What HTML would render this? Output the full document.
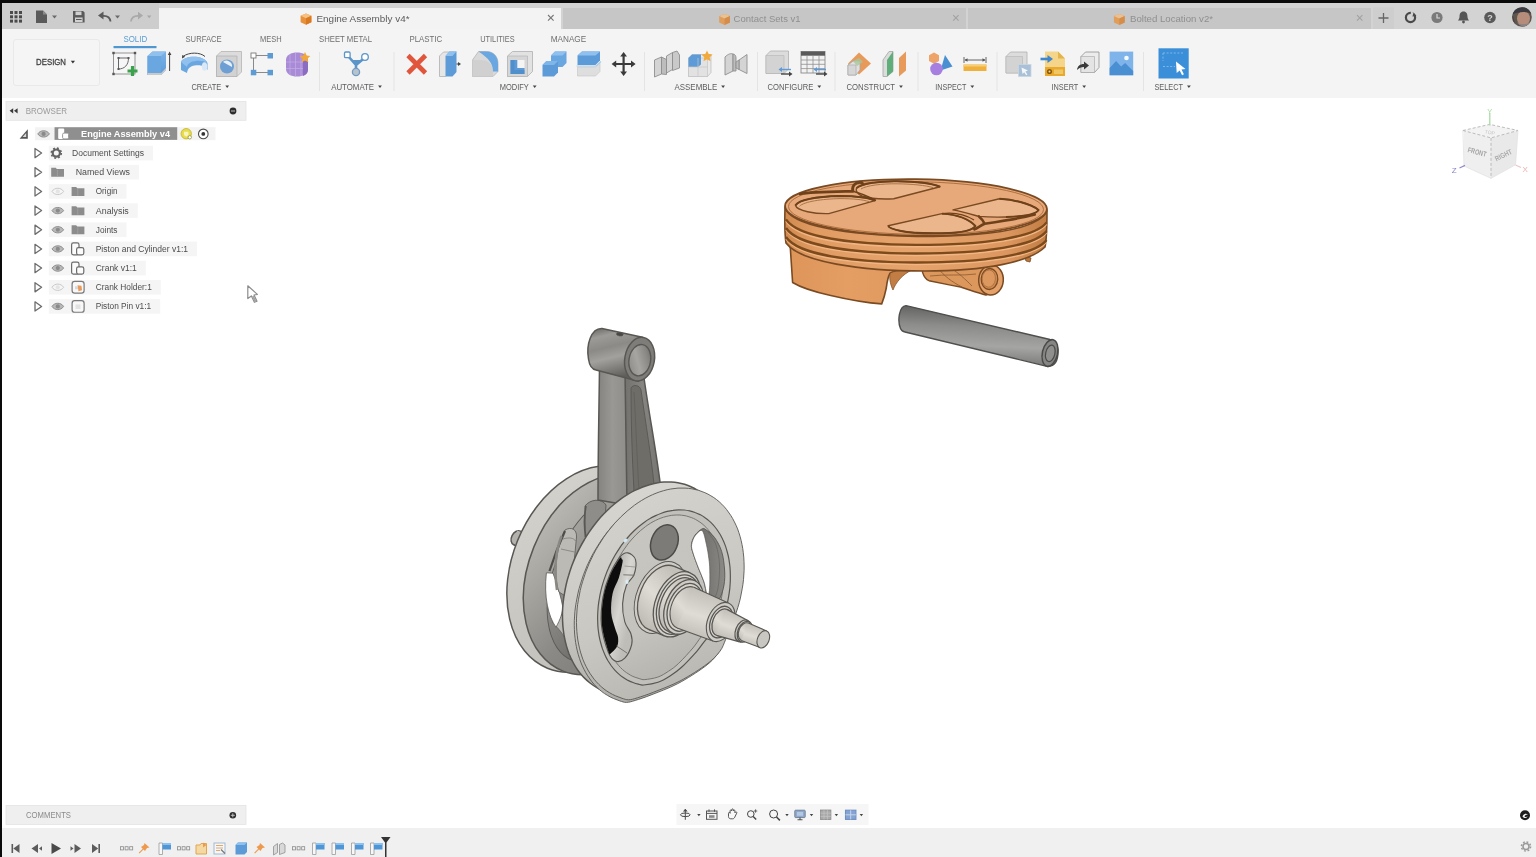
<!DOCTYPE html>
<html lang="en">
<head>
<meta charset="utf-8">
<title>Engine Assembly v4 - Fusion</title>
<style>
*{box-sizing:border-box;margin:0;padding:0}
html,body{width:1536px;height:857px;overflow:hidden;background:#fff;font-family:"Liberation Sans",sans-serif;color:#555}
#app{position:absolute;left:0;top:0;width:1536px;height:857px;overflow:hidden;background:#fff}
.abs{position:absolute}
#blacktop{left:0;top:0;width:1536px;height:3px;background:#0a0a0a}
#blackleft{left:0;top:0;width:2px;height:857px;background:#0a0a0a}
#titlebar{left:2px;top:3px;width:1534px;height:26px;background:#d3d3d3}
#qat{left:2px;top:3px;width:157px;height:26px;background:#cdcdcd}
.tab{position:absolute;top:7.5px;height:21.5px;background:#c6c6c6;font-size:9px;color:#8a8a8a;line-height:22px;white-space:nowrap}
.tab.active{background:#f3f3f3;color:#666}
.tab .x{position:absolute;right:6px;top:0;font-size:11px;color:#999}
#toolbar{left:2px;top:29px;width:1534px;height:68.6px;background:#f4f4f4}
.ttab{position:absolute;top:33px;font-size:7.5px;color:#6d6d6d;letter-spacing:0;white-space:nowrap;transform:translateX(-50%)}
.ttab.on{color:#5b9bd0}
.glabel{position:absolute;top:82px;font-size:7.5px;color:#5f5f5f;white-space:nowrap;transform:translateX(-50%)}
.sep{position:absolute;top:44px;width:1px;height:48px;background:#e4e4e4}
#design{left:12.6px;top:38.5px;width:87px;height:47.5px;border:1px solid #e9e9e9;border-radius:3px;background:#f5f5f5;font-size:8px;color:#444;text-align:center;line-height:46px;font-weight:bold}
#canvas{left:2px;top:98px;width:1534px;height:730px;background:#fff}
#bhead{left:6px;top:101px;width:240px;height:19px;background:#f0f0f0;border:1px solid #e8e8e8;font-size:7.5px;color:#7a7a7a;line-height:18px}
.row{position:absolute;height:15px;font-size:7.5px;color:#5a5a5a;line-height:15px;white-space:nowrap}
.lbl{position:absolute;top:0;height:15px;background:#f3f3f3;padding:0 6px;line-height:15px}
#comments{left:6px;top:805px;width:240px;height:19px;background:#f0f0f0;border:1px solid #e8e8e8;font-size:7.5px;color:#7a7a7a;line-height:18px}
#timeline{left:2px;top:828px;width:1534px;height:29px;background:#f0f0f0}
</style>
</head>
<body>
<div id="app">
  <div class="abs" id="titlebar"></div>
  <div class="abs" id="qat"></div>
  <div class="tab active" style="left:159px;width:402px"></div>
  <div class="tab" style="left:563px;width:403px"></div>
  <div class="tab" style="left:968px;width:403px"></div>
  <div class="abs" id="toolbar"></div>
  <div class="abs" id="design"></div>
  <svg class="abs" style="left:0;top:0;filter:blur(0.3px)" width="1536" height="98" viewBox="0 0 1536 98">
<defs>
<linearGradient id="tBlue" x1="0" y1="0" x2="0" y2="1"><stop offset="0" stop-color="#7ab2e6"/><stop offset="1" stop-color="#5c9bd8"/></linearGradient>
<linearGradient id="tGray" x1="0" y1="0" x2="1" y2="1"><stop offset="0" stop-color="#e4e4e4"/><stop offset="1" stop-color="#c4c4c4"/></linearGradient>
</defs>
<!-- quick access -->
<g fill="#4a4a4a">
  <g id="gridic"><rect x="10" y="11" width="3" height="3"/><rect x="14.5" y="11" width="3" height="3"/><rect x="19" y="11" width="3" height="3"/><rect x="10" y="15.3" width="3" height="3"/><rect x="14.5" y="15.3" width="3" height="3"/><rect x="19" y="15.3" width="3" height="3"/><rect x="10" y="19.6" width="3" height="3"/><rect x="14.5" y="19.6" width="3" height="3"/><rect x="19" y="19.6" width="3" height="3"/></g>
  <path d="M36 10.5h7l4 4v8.5h-11z" fill="#5a5a5a"/><path d="M43 10.5l4 4h-4z" fill="#8a8a8a"/>
  <path d="M52 15.5h5l-2.5 3z" fill="#6a6a6a"/>
  <path d="M73 11h10l1.6 1.6v9.9h-11.6z" fill="#5a5a5a"/><rect x="75.5" y="11.5" width="6" height="3.6" fill="#d0d0d0"/><rect x="75" y="17.5" width="7.6" height="4.5" fill="#d0d0d0"/><rect x="76" y="19" width="5.6" height="1" fill="#5a5a5a"/>
  <path d="M115 15.5h5l-2.5 3z" fill="#6a6a6a"/>
  <path d="M147 15.5h4.4l-2.2 2.8z" fill="#a8a8a8"/>
</g>
<path d="M110.5 21.5c-0.5-4-3.5-6-8-5.6" fill="none" stroke="#5a5a5a" stroke-width="1.8"/><path d="M98 15.6l5.5-4v8z" fill="#5a5a5a"/>
<path d="M131 21.5c0.5-4 3.5-6 8-5.6" fill="none" stroke="#a9a9a9" stroke-width="1.7"/><path d="M143 15.6l-5-3.8v7.6z" fill="#a9a9a9"/>
<!-- tab icons (orange cubes) -->
<g id="cube1"><path d="M306 13.6l5.4 2.2v6.4l-5.4 2.6l-5.4-2.6v-6.4z" fill="#e8913a"/><path d="M306 13.6l5.4 2.2l-5.4 2.4l-5.4-2.4z" fill="#f6c080"/><path d="M306 18.2v6.6l5.4-2.6v-6.4z" fill="#d97a22"/></g>
<g transform="translate(418.6,0.3)" opacity="0.75"><path d="M306 13.6l5.4 2.2v6.4l-5.4 2.6l-5.4-2.6v-6.4z" fill="#e8913a"/><path d="M306 13.6l5.4 2.2l-5.4 2.4l-5.4-2.4z" fill="#f6c080"/><path d="M306 18.2v6.6l5.4-2.6v-6.4z" fill="#d97a22"/></g>
<g transform="translate(813.3,0.3)" opacity="0.75"><path d="M306 13.6l5.4 2.2v6.4l-5.4 2.6l-5.4-2.6v-6.4z" fill="#e8913a"/><path d="M306 13.6l5.4 2.2l-5.4 2.4l-5.4-2.4z" fill="#f6c080"/><path d="M306 18.2v6.6l5.4-2.6v-6.4z" fill="#d97a22"/></g>
<!-- tab close X -->
<g stroke="#777" stroke-width="1.1" fill="none"><path d="M548 15l5.6 5.6M553.6 15l-5.6 5.6"/></g>
<g stroke="#a2a2a2" stroke-width="1.1" fill="none"><path d="M953.2 15.2l5.4 5.4M958.6 15.2l-5.4 5.4"/><path d="M1357 15.2l5.4 5.4M1362.4 15.2l-5.4 5.4"/></g>
<!-- plus -->
<rect x="1373" y="7.5" width="21" height="21.5" fill="#cecece"/>
<path d="M1378.5 18h10M1383.5 13v10" stroke="#666" stroke-width="1.3"/>
<!-- right icons -->
<circle cx="1410.5" cy="17.5" r="4.6" fill="none" stroke="#4a4a4a" stroke-width="2.2"/><path d="M1411 11l4 3l-4.5 2z" fill="#d2d2d2"/><path d="M1413.6 12.6l2.8 3.4l-4 0.6z" fill="#4a4a4a"/>
<circle cx="1437" cy="17.5" r="5.6" fill="#7a7a7a"/><path d="M1437 14v4h3" stroke="#d9d9d9" stroke-width="1.2" fill="none"/>
<path d="M1463.5 11.5c-3 0-4 2.5-4 5.2c0 2-1 3-1.6 3.8h11.2c-0.6-0.8-1.6-1.8-1.6-3.8c0-2.7-1-5.2-4-5.2z" fill="#555"/><circle cx="1463.500" cy="22" r="1.400" fill="#555"/>
<circle cx="1490" cy="17.5" r="5.800" fill="#5a5a5a"/><text x="1490" y="20.8" font-size="9" font-weight="bold" text-anchor="middle" fill="#d6d6d6" font-family="Liberation Sans, sans-serif">?</text>
<clipPath id="avc"><circle cx="1522" cy="17" r="9.800"/></clipPath>
<g clip-path="url(#avc)"><rect x="1512" y="7" width="20" height="20" fill="#5e5550"/><ellipse cx="1523.500" cy="18.500" rx="6.500" ry="7.500" fill="#b58d7a"/><path d="M1512 7h20v7c-4-2.500-14-3-20 1z" fill="#3b3a40"/><path d="M1517 21.500c1.500 6 11.500 6 13 0c-1 2-3.500 2.500-6.500 2.500s-5.500-0.500-6.500-2.500z" fill="#8c8682"/><path d="M1512 14c2 3 3 9 3 13h-3z" fill="#4a4440"/></g>
<!-- SOLID underline -->
<rect x="113.5" y="46" width="43" height="2.2" fill="#4f97d1"/>
<!-- separators -->
<g fill="#e4e4e4"><rect x="319" y="52" width="1" height="39"/><rect x="393.5" y="52" width="1" height="39"/><rect x="644" y="52" width="1" height="39"/><rect x="757" y="52" width="1" height="39"/><rect x="834.5" y="52" width="1" height="39"/><rect x="917.5" y="52" width="1" height="39"/><rect x="996.5" y="52" width="1" height="39"/><rect x="1143" y="52" width="1" height="39"/></g>

<!-- CREATE -->
<g id="i-sketch"><rect x="113.5" y="53" width="21.5" height="21" fill="#f6f6f6" stroke="#8a8a8a" stroke-width="0.9"/><g fill="#555"><rect x="112.3" y="51.8" width="2.4" height="2.4"/><rect x="133.8" y="51.8" width="2.4" height="2.4"/><rect x="112.3" y="72.8" width="2.4" height="2.4"/></g><path d="M118.5 58h10c0 7-4 11-10 11z" fill="none" stroke="#666" stroke-width="1"/><g fill="#555"><rect x="117.5" y="57" width="2" height="2"/><rect x="127.5" y="57" width="2" height="2"/><rect x="117.5" y="68" width="2" height="2"/></g><path d="M132.5 66v10M127.5 71h10" stroke="#3aa24a" stroke-width="3.2"/></g>
<g id="i-extrude"><path d="M147.5 56l5-4.5h13.5v18.5l-5 5h-13.5z" fill="url(#tBlue)"/><path d="M147.5 56h13.5v19h-13.5z" fill="#6aa6e0"/><path d="M147.5 56l5-4.5h13.5l-5 4.5z" fill="#8fc0ee"/><path d="M147.5 73h13.5l5-5v2l-5 5h-13.5z" fill="#c9c9c9"/><path d="M169.6 54v17" stroke="#444" stroke-width="1"/><path d="M167.8 55l1.8-3.5l1.8 3.5z" fill="#444"/></g>
<g id="i-revolve"><path d="M181 62c2-6 22-8 26.5 1l0 7c-3-5-8-5-13-4.500c-4 0.500-7 3-7.500 7.500l-6-3z" fill="#6aa6e0"/><path d="M181 62c2-6 22-8 26.500 1c-5-4-20-3-20.500 4z" fill="#8fc0ee"/><ellipse cx="204.500" cy="66.500" rx="2.600" ry="4.200" fill="#d9e8f6"/><path d="M183 56.500c6-4.500 17-4.500 22 0" fill="none" stroke="#444" stroke-width="1"/><path d="M182 58.500l0.200-3.600l3 1.800z" fill="#444"/></g>
<g id="i-hole"><path d="M216.500 56l4.500-4.500h20.500v20.500l-4.500 4.500h-20.500z" fill="#dcdcdc" stroke="#b5b5b5" stroke-width="0.800"/><path d="M216.500 56h20.500v20.500h-20.500z" fill="#d2d2d2" stroke="#b0b0b0" stroke-width="0.700"/><circle cx="227" cy="66.500" r="7" fill="#6e9fd4"/><path d="M223 62a5.500 5.500 0 0 1 9 5z" fill="#e8f0f8"/></g>
<g id="i-pattern"><path d="M253.500 55.500h17M253.500 72.500h17M253.500 55.500v17" stroke="#8a8a8a" stroke-width="1" fill="none"/><rect x="251" y="53" width="5" height="5" fill="#fff" stroke="#7a7a7a" stroke-width="0.900"/><rect x="267.500" y="53" width="5.500" height="5.500" fill="#5f9bd3"/><rect x="250.800" y="69.800" width="5.500" height="5.500" fill="#5f9bd3"/><rect x="267.500" y="69.800" width="5.500" height="5.500" fill="#5f9bd3"/></g>
<g id="i-form"><path d="M286 60c0-5 5-7.500 11-7.500s11 2.500 11 7.500v9c0 5-5 7.500-11 7.500s-11-2.500-11-7.500z" fill="#a98ad6"/><path d="M303 57c3 1 5 2 5 5v8c0 3-2 5-5 6z" fill="#8a6cc0"/><path d="M290 54v21M295.500 53v23.500M301 53.500v22.500M286 62h17M286 68.500h17" stroke="#c3aee6" stroke-width="0.700" fill="none"/><path d="M303.500 51l1.600 3.400l3.700 0.500l-2.700 2.600l0.700 3.700l-3.300-1.800l-3.300 1.800l0.700-3.700l-2.700-2.600l3.700-0.500z" fill="#f2a93b" transform="translate(1.500,1) scale(1.000)"/></g>
<!-- AUTOMATE -->
<g id="i-auto"><path d="M348 56l8 9v6M365 57.500l-9 7.500" stroke="#5b95c9" stroke-width="2.600" fill="none"/><path d="M351 60l10 0l-5 6z" fill="#5b95c9"/><rect x="344.500" y="52" width="5.600" height="5.600" rx="1.200" fill="#fff" stroke="#5b95c9" stroke-width="1.300"/><circle cx="365" cy="57" r="3.300" fill="#fff" stroke="#5b95c9" stroke-width="1.300"/><circle cx="356" cy="72" r="3.600" fill="#b9c3cc" stroke="#6f9bc4" stroke-width="1.300"/></g>
<!-- MODIFY -->
<path d="M408 55.500l17.500 17.500M425.500 55.500l-17.500 17.500" stroke="#e2553d" stroke-width="4.600"/>
<g id="i-press"><path d="M439.500 56l4-4h6v20.500l-4 4h-6z" fill="#e6e6e6" stroke="#b0b0b0" stroke-width="0.800"/><path d="M445.500 56l4-4.500h7v20.500l-4 4.500h-7z" fill="#5c9bd8"/><path d="M445.500 56l4-4.500h7l-4 4.500z" fill="#8fc0ee"/><path d="M456.500 64h2" stroke="#444" stroke-width="1"/><path d="M458 62l3 2l-3 2z" fill="#444"/></g>
<g id="i-fillet"><path d="M472.500 60l6-8.500h8c7 0 11.500 5 11.500 12v8l-5 5h-20.500z" fill="#d9d9d9" stroke="#b5b5b5" stroke-width="0.800"/><path d="M472.500 60h8c7 0 12 3 12.500 12v4.500h-20.500z" fill="#d0d0d0"/><path d="M478.500 51.500h8c7 0 11.500 5 11.500 12v8l-5 0c0-8-4-13-14.500-20z" fill="#6aa6e0"/></g>
<g id="i-shell"><path d="M507.500 56l5-4.500h20v20l-5 5h-20z" fill="#e2e2e2" stroke="#b0b0b0" stroke-width="0.800"/><path d="M507.500 56h20v20.500h-20z" fill="#d6d6d6" stroke="#b5b5b5" stroke-width="0.700"/><path d="M510.500 60h7v8h7v6h-14z" fill="#5c9bd8"/><path d="M517.500 60h7v8h-7z" fill="#f4f4f4"/><path d="M510.500 60h4v10h10v4h-14z" fill="#4a86c4" opacity="0.600"/></g>
<g id="i-combine"><path d="M551 55.500l4-4h11.500v11.500l-4 4h-11.500z" fill="#6aa6e0"/><path d="M551 55.500l4-4h11.500l-4 4z" fill="#8fc0ee"/><path d="M542.500 65l4-4h11.500v11.500l-4 4h-11.500z" fill="#5c9bd8"/><path d="M542.500 65l4-4h11.500l-4 4z" fill="#7fb6ea"/></g>
<g id="i-split"><path d="M577.500 55.500l4.500-4h18v9l-4.500 4.500h-18z" fill="#5c9bd8"/><path d="M577.500 55.500l4.500-4h18l-4.500 4z" fill="#8fc0ee"/><path d="M577.500 67h18l4.500-4v8.500l-4.500 4.500h-18z" fill="#dedede" stroke="#c4c4c4" stroke-width="0.600"/><path d="M576.500 66l19.500 0l5-4.500" stroke="#a9cdee" stroke-width="1.200" fill="none"/></g>
<g id="i-move" fill="#3a3a3a"><path d="M623.600 52l3.400 4.600h-2.300v6.300h6.300v-2.300l4.600 3.400l-4.600 3.400v-2.300h-6.300v6.300h2.300l-3.400 4.600l-3.400-4.600h2.300v-6.300h-6.300v2.300l-4.600-3.400l4.600-3.400v2.300h6.300v-6.300h-2.300z"/></g>
<!-- ASSEMBLE -->
<g id="i-joint1" fill="#d4d4d4" stroke="#8f8f8f" stroke-width="0.900"><path d="M654.500 60l7-3v17l-7 3z"/><path d="M661.500 57l5 2.500v15l-5-0.500z" fill="#bdbdbd"/><path d="M666.500 56l6-3.500v17l-6 3.500z"/><path d="M672.500 52.500l4.500-1.500l2.500 4v13l-7 2.500z" fill="#c9c9c9"/></g>
<g id="i-newcomp"><path d="M688.500 58l3.500-3.500h19v18l-3.500 4h-19z" fill="#e9e9e9" stroke="#b9b9b9" stroke-width="0.700"/><path d="M688.500 58h19v18.500h-19z" fill="#e2e2e2" stroke="#c0c0c0" stroke-width="0.600"/><path d="M688.500 58l3.500-3.500h9v10l-3 2.500h-9.500z" fill="#5c9bd8"/><path d="M698 58v18.500M688.500 67h19" stroke="#c6c6c6" stroke-width="0.700"/><path d="M707 50.500l1.700 3.600l3.900 0.500l-2.900 2.700l0.800 3.900l-3.500-1.900l-3.500 1.900l0.800-3.900l-2.900-2.700l3.900-0.500z" fill="#f2a93b"/></g>
<g id="i-joint3" fill="#d4d4d4" stroke="#8f8f8f" stroke-width="0.900"><path d="M725 57c3-3 6-4 8-3v17l-8 4z"/><path d="M733 54c2 0 3 2 3 4v13l-3 0z" fill="#bdbdbd"/><path d="M739 60l8-5.500v19l-8-4z"/><path d="M739 60l-3 2v6l3 1.500z" fill="#bdbdbd"/></g>
<!-- CONFIGURE -->
<g id="i-conf1"><path d="M766 55.500l4.500-4.500h18v18l-4.500 4.500h-18z" fill="#dcdcdc" stroke="#b0b0b0" stroke-width="0.800"/><path d="M766 55.500h18v18h-18z" fill="#d3d3d3" stroke="#b5b5b5" stroke-width="0.600"/><path d="M781 69.500h10" stroke="#5c9bd8" stroke-width="1.400"/><path d="M782 67l-3.500 2.500l3.500 2.500z" fill="#5c9bd8"/><path d="M781 74h9" stroke="#444" stroke-width="1.400"/><path d="M789 71.500l3.500 2.500l-3.500 2.500z" fill="#444"/></g>
<g id="i-conf2"><rect x="801" y="51.500" width="24" height="21.500" fill="#f2f2f2" stroke="#8a8a8a" stroke-width="0.900"/><rect x="801" y="51.500" width="24" height="4.200" fill="#5a5a5a"/><path d="M801 60h24M801 64.300h24M801 68.600h24M807 55.700v17.300M813 55.700v17.300M819 55.700v17.300" stroke="#8f8f8f" stroke-width="0.800"/><path d="M816 69.500h10" stroke="#5c9bd8" stroke-width="1.400"/><path d="M817 67l-3.500 2.500l3.500 2.500z" fill="#5c9bd8"/><path d="M816 74h9" stroke="#444" stroke-width="1.400"/><path d="M824 71.500l3.500 2.500l-3.500 2.500z" fill="#444"/></g>
<!-- CONSTRUCT -->
<g id="i-cons1"><path d="M859 52.500l12 11l-12 11l-11-11z" fill="#e89a5a"/><path d="M848 65l5-4h7v9l-4 5h-8z" fill="#e0e0e0" stroke="#a5a5a5" stroke-width="0.800"/><path d="M848 65h8v10h-8z" fill="#d6d6d6" stroke="#a5a5a5" stroke-width="0.600"/><path d="M853 61l6-3l4 4l-6 4z" fill="#a9c79a" opacity="0.800"/></g>
<g id="i-cons2"><path d="M883 60l6-8.500h4v20l-6 5h-4z" fill="#dcdcdc" stroke="#a5a5a5" stroke-width="0.800"/><path d="M887 60l6-8.500v20l-6 5z" fill="#5fae7a"/><path d="M899 58l7-6.500v19l-7 6z" fill="#e89a5a"/></g>
<!-- INSPECT -->
<g id="i-insp1"><path d="M934 52.500l5 2.800v5.700l-5 2.800l-5-2.800v-5.700z" fill="#eea468"/><path d="M945 55l7.500 11.500l-12 4z" fill="#4a8fd2"/><circle cx="936.500" cy="69" r="6.300" fill="#a77fe0"/></g>
<g id="i-insp2"><rect x="963.500" y="64.500" width="23" height="6.500" fill="#efb13c"/><rect x="963.500" y="64.500" width="23" height="2" fill="#f6cf7a"/><path d="M964 57v6M986 57v6M965 60h20" stroke="#555" stroke-width="0.900"/><path d="M967.500 58.300l-3 1.700l3 1.700zM982.500 58.300l3 1.700l-3 1.700z" fill="#555"/></g>
<!-- INSERT -->
<g id="i-ins1"><path d="M1006 56.500l4.500-4.500h16.500v16.500l-4.500 4.500h-16.500z" fill="#dcdcdc" stroke="#b0b0b0" stroke-width="0.800"/><path d="M1006 56.500h16.500v16.500h-16.500z" fill="#d3d3d3" stroke="#b5b5b5" stroke-width="0.600"/><rect x="1018.500" y="64.500" width="12.500" height="12" fill="#a9c0d6" stroke="#c9d6e2" stroke-width="0.800"/><path d="M1021.500 67.500l6.500 3l-2.600 0.900l2 3l-1.200 0.800l-2-3l-1.700 1.900z" fill="#f4f8fc"/></g>
<g id="i-ins2"><path d="M1045 51.500h13l7 7v17.500h-20z" fill="#f4d58a"/><path d="M1058 51.500l7 7h-7z" fill="#e3b54a"/><rect x="1045" y="67" width="20" height="9" fill="#e9a92c"/><circle cx="1049.500" cy="71.500" r="2.600" fill="#8a5a10"/><circle cx="1049.500" cy="71.500" r="1" fill="#f4d58a"/><path d="M1054 69.500h9v4.500h-9z" fill="#f1c766"/><path d="M1040.500 59h8" stroke="#3f86d0" stroke-width="2.600"/><path d="M1047.500 55l5.500 4l-5.500 4z" fill="#3f86d0"/></g>
<g id="i-ins3"><path d="M1081 56.500l4.500-4.500h13.500v15.500l-4.500 5h-13.500z" fill="#ececec" stroke="#9a9a9a" stroke-width="0.900"/><path d="M1081 56.500h13.500v16h-13.500z" fill="#e4e4e4" stroke="#a5a5a5" stroke-width="0.600"/><path d="M1077 70c0.500-4 3-6 7-6v-2.500l5 4l-5 4v-2.500c-3 0-5 1-7 3z" fill="#3a3a3a"/></g>
<g id="i-ins4"><rect x="1109.600" y="51.600" width="23.600" height="23.600" fill="#7fb4ea"/><path d="M1109.600 68l6.500-7l5 5.500l4-3.500l8.100 8v4.200h-23.600z" fill="#4a8fd2"/><circle cx="1126.500" cy="58" r="2.300" fill="#f4f9ff"/></g>
<!-- SELECT -->
<g id="i-select"><rect x="1158.500" y="48.300" width="30.200" height="30.200" fill="#3b8fd8"/><path d="M1163 53h21M1163 53v8M1163 66.500h12" stroke="#7db6ea" stroke-width="1" stroke-dasharray="2 1.600" fill="none"/><path d="M1176 61.500l9.500 7.500l-4 0.600l2.400 4.600l-1.800 1l-2.400-4.700l-3 2.600z" fill="#fff"/></g>
</svg>

  <div class="abs" id="canvas"></div>
<svg class="abs" style="left:0;top:0;filter:blur(0.5px)" width="1536" height="857" viewBox="0 0 1536 857">
<defs>
<linearGradient id="gRim" x1="0" y1="0" x2="1" y2="1"><stop offset="0" stop-color="#d6d4cf"/><stop offset="1" stop-color="#bebcb7"/></linearGradient>
<linearGradient id="gFace" x1="0" y1="0" x2="1" y2="1"><stop offset="0" stop-color="#d9d7d2"/><stop offset="1" stop-color="#c9c7c2"/></linearGradient>
<linearGradient id="gRecess" x1="0" y1="0" x2="1" y2="1"><stop offset="0" stop-color="#c9c7c2"/><stop offset="1" stop-color="#d1cfca"/></linearGradient>
<linearGradient id="gBackFace" x1="0" y1="0" x2="1" y2="0.6"><stop offset="0" stop-color="#c4c2bc"/><stop offset="0.35" stop-color="#a9a7a2"/><stop offset="0.7" stop-color="#8b8985"/><stop offset="1" stop-color="#7f7d79"/></linearGradient>
<linearGradient id="gBackIn" x1="0" y1="0" x2="1" y2="0.3"><stop offset="0" stop-color="#8f8d89"/><stop offset="1" stop-color="#6f6d6a"/></linearGradient>
<linearGradient id="gRodF" x1="0" y1="0" x2="1" y2="0"><stop offset="0" stop-color="#858380"/><stop offset="0.5" stop-color="#9a9894"/><stop offset="1" stop-color="#8f8d89"/></linearGradient>
<linearGradient id="gRodS" x1="0" y1="0" x2="1" y2="0"><stop offset="0" stop-color="#72706d"/><stop offset="0.5" stop-color="#878581"/><stop offset="1" stop-color="#767471"/></linearGradient>
<linearGradient id="gCyl" x1="0" y1="0" x2="0.25" y2="1"><stop offset="0" stop-color="#63615e"/><stop offset="0.2" stop-color="#9d9b97"/><stop offset="0.42" stop-color="#8c8a86"/><stop offset="0.62" stop-color="#a3a19d"/><stop offset="0.86" stop-color="#7a7874"/><stop offset="1" stop-color="#615f5c"/></linearGradient>
<linearGradient id="gShaft" x1="0.3" y1="0" x2="0" y2="1"><stop offset="0" stop-color="#c3c0b9"/><stop offset="0.45" stop-color="#dfdcd5"/><stop offset="1" stop-color="#b5b2ac"/></linearGradient>
<linearGradient id="gPin" x1="0.12" y1="0" x2="0" y2="1"><stop offset="0" stop-color="#626261"/><stop offset="0.3" stop-color="#8c8c8a"/><stop offset="0.6" stop-color="#a5a5a3"/><stop offset="1" stop-color="#6a6a69"/></linearGradient>
<linearGradient id="gPTop" x1="0" y1="0" x2="1" y2="0"><stop offset="0" stop-color="#dc9a63"/><stop offset="0.5" stop-color="#e3a46e"/><stop offset="1" stop-color="#dd9c66"/></linearGradient>
<linearGradient id="gPSide" x1="0" y1="0" x2="1" y2="0"><stop offset="0" stop-color="#d08a50"/><stop offset="0.12" stop-color="#e09c63"/><stop offset="0.5" stop-color="#e6a36c"/><stop offset="0.85" stop-color="#dc9760"/><stop offset="1" stop-color="#c27d44"/></linearGradient>
<linearGradient id="gPSkirt" x1="0" y1="0" x2="1" y2="0"><stop offset="0" stop-color="#dd955a"/><stop offset="0.5" stop-color="#e49d62"/><stop offset="1" stop-color="#e09960"/></linearGradient>
<clipPath id="chord"><polygon points="276,954 1090,393 1090,200 276,200"/></clipPath>
</defs>
<g id="crank">
<ellipse cx="517.0" cy="538.0" rx="5.5" ry="7.5" transform="rotate(26.5 517.0 538.0)" fill="#b4b2ad" stroke="#595753" stroke-width="1.5" />
<path d="M517 530.5 L525 533.5 L523 547.5 L515 545.5 Z" fill="#b4b2ad" stroke="none" stroke-width="1.5" stroke-linejoin="round" />
<ellipse cx="587.5" cy="569.0" rx="75.5" ry="107.0" transform="rotate(22 587.5 569.0)" fill="url(#gRim)" stroke="#595753" stroke-width="1.5" />
<ellipse cx="601.5" cy="574.5" rx="73.0" ry="104.0" transform="rotate(22 601.5 574.5)" fill="url(#gBackFace)" stroke="#595753" stroke-width="1.5" />
<linearGradient id="gBackIn2" gradientUnits="userSpaceOnUse" x1="545" y1="560" x2="640" y2="600"><stop offset="0" stop-color="#a7a5a0"/><stop offset="0.4" stop-color="#908e8a"/><stop offset="1" stop-color="#6f6d6a"/></linearGradient>
<ellipse cx="606.0" cy="577.0" rx="52.0" ry="90.0" transform="rotate(22 606.0 577.0)" fill="url(#gBackIn2)" stroke="#595753" stroke-width="0.9" />
<path d="M552 622 C556 626 562 632 566 640 L572 634 L566 612 Z" fill="#bdbbb6" stroke="#595753" stroke-width="0.7" stroke-linejoin="round" />
<path d="M546.4 572.8 L553 573.2 C557.5 585 561 597 562.8 607 C562.5 613 560.5 619 556 627.2 C548.5 617 543.6 597 546.4 572.8 Z" fill="#ffffff" stroke="#595753" stroke-width="0.8" stroke-linejoin="round" />
<path d="M565 530 C571 526.5 577 529 576.5 537 C575.5 550 574 562 572.5 575 C571.5 584 570 592 568.5 598 L559 592 C553 575 556 548 565 530 Z" fill="#bcbab5" stroke="#595753" stroke-width="0.8" stroke-linejoin="round" />
<path d="M563 539 C569 537 574 538 575.5 541 M561 549 L574.5 552" fill="none" stroke="#77756f" stroke-width="0.7" stroke-linejoin="round" />
<path d="M565 531 C558 546 553 560 549.5 571" fill="none" stroke="#4f4d4a" stroke-width="2.2" stroke-linejoin="round" />
<path d="M561.5 536 C556 550 554 570 557 590" fill="none" stroke="#8a8884" stroke-width="2.5" stroke-linejoin="round" />
<path d="M585 506 C590 499 602 498 606 505 L604 537 C598 545 589 543 585 537 Z" fill="#8f8d89" stroke="#595753" stroke-width="0.9" stroke-linejoin="round" />
<path d="M586 506 C584 516 584 528 586 537" fill="none" stroke="#5a5854" stroke-width="1.6" stroke-linejoin="round" />
</g>
<g id="rod">
<path d="M624 372 L644 378 C650 420 657 455 661 490 L626 500 Z" fill="url(#gRodS)" stroke="#595753" stroke-width="1.5" stroke-linejoin="round" />
<path d="M631 388 C633 384 640 385 641 390 C646 425 651 455 654 484 L634 492 C632 455 631 420 631 388 Z" fill="#6f6d67" stroke="#595753" stroke-width="0.9" stroke-linejoin="round" />
<path d="M634 392 C636 425 637 460 639 490" fill="none" stroke="#5d5b58" stroke-width="0.7" stroke-linejoin="round" />
<path d="M599.5 368 L625 372 L627 505 L598 500 C598 455 599 410 599.5 368 Z" fill="url(#gRodF)" stroke="#595753" stroke-width="1.5" stroke-linejoin="round" />
<path d="M602 328.5 C591 328 586 345 588.5 359 C589.5 366 592.5 369.5 596 370 L638.5 381.2 L642.5 337.2 Z" fill="url(#gCyl)" stroke="#595753" stroke-width="1.5" stroke-linejoin="round" />
<linearGradient id="gHole" x1="0" y1="0.8" x2="1" y2="0.1"><stop offset="0" stop-color="#8d8b87"/><stop offset="0.4" stop-color="#a7a5a1"/><stop offset="0.75" stop-color="#8a8884"/><stop offset="1" stop-color="#6c6a67"/></linearGradient>
<ellipse cx="639.6" cy="359.2" rx="14.8" ry="22.0" transform="rotate(10 639.6 359.2)" fill="#7f7d79" stroke="#595753" stroke-width="1.5" />
<ellipse cx="639.8" cy="360.2" rx="10.8" ry="15.8" transform="rotate(10 639.8 360.2)" fill="url(#gHole)" stroke="#595753" stroke-width="1.4" />
<ellipse cx="619.8" cy="334.3" rx="3.4" ry="1.7" transform="rotate(8 619.8 334.3)" fill="#4a4846" stroke="#595753" stroke-width="0.6" />
</g>
<linearGradient id="gFace2" gradientUnits="userSpaceOnUse" x1="610" y1="500" x2="690" y2="700"><stop offset="0" stop-color="#d4d2cd"/><stop offset="0.55" stop-color="#cac8c3"/><stop offset="1" stop-color="#b7b5b0"/></linearGradient>
<linearGradient id="gRec2" gradientUnits="userSpaceOnUse" x1="620" y1="520" x2="690" y2="690"><stop offset="0" stop-color="#c8c6c1"/><stop offset="0.6" stop-color="#c5c3be"/><stop offset="1" stop-color="#b0aea9"/></linearGradient>
<linearGradient id="gRim2" gradientUnits="userSpaceOnUse" x1="600" y1="490" x2="600" y2="700"><stop offset="0" stop-color="#d7d5d0"/><stop offset="0.6" stop-color="#cdcbc6"/><stop offset="1" stop-color="#b0aea9"/></linearGradient>
<g id="fwheel">
<path d="M717.3 619.5 C716.0 622.4 714.6 625.3 713.1 628.2 C711.6 631.1 710.1 633.9 708.4 636.6 C706.8 639.4 705.1 642.1 703.3 644.7 C701.5 647.3 699.6 649.9 697.7 652.3 C695.8 654.8 693.8 657.2 691.8 659.5 C689.7 661.8 687.6 664.0 685.4 666.1 C683.3 668.2 681.1 670.2 678.8 672.1 C676.6 674.0 674.3 675.8 672.0 677.5 C669.7 679.2 667.3 680.7 664.9 682.2 C662.6 683.6 660.1 685.0 657.7 686.2 C655.3 687.4 652.9 688.5 650.5 689.4 C648.0 690.4 645.6 691.2 643.1 691.9 C640.7 692.6 638.3 693.2 635.9 693.6 C633.4 694.0 631.0 694.3 628.6 694.5 C626.3 694.6 623.9 694.6 621.6 694.5 C619.2 694.4 616.9 694.2 614.7 693.8 C612.4 693.4 610.2 692.9 608.0 692.3 C605.9 691.6 603.7 690.8 601.7 689.9 C599.6 689.0 597.6 688.0 595.7 686.8 C593.7 685.7 591.8 684.4 590.0 683.0 C588.2 681.6 586.5 680.1 584.8 678.4 C583.2 676.8 581.6 675.0 580.1 673.2 C578.6 671.3 577.2 669.3 575.9 667.3 C574.6 665.2 573.3 663.0 572.2 660.7 C571.0 658.5 570.0 656.1 569.0 653.7 C568.1 651.3 567.3 648.7 566.5 646.1 C565.8 643.5 565.1 640.9 564.6 638.1 C564.0 635.4 563.6 632.6 563.3 629.8 C562.9 626.9 562.7 624.0 562.6 621.1 C562.5 618.1 562.4 615.2 562.5 612.1 C562.6 609.1 562.8 606.1 563.1 603.0 C563.4 600.0 563.8 596.9 564.4 593.8 C564.9 590.7 565.5 587.6 566.2 584.5 C566.9 581.4 567.7 578.3 568.7 575.3 C569.6 572.2 570.6 569.1 571.7 566.1 C572.8 563.1 574.0 560.1 575.3 557.1 C576.6 554.2 578.0 551.3 579.5 548.4 C581.0 545.5 582.5 542.7 584.2 540.0 C585.8 537.2 587.5 534.5 589.3 531.9 C591.1 529.3 593.0 526.7 594.9 524.3 C596.8 521.8 598.8 519.4 600.8 517.1 C602.9 514.8 605.0 512.6 607.2 510.5 C609.3 508.4 611.5 506.4 613.8 504.5 C616.0 502.6 618.3 500.8 620.6 499.1 C622.9 497.4 625.3 495.9 627.7 494.4 C630.0 493.0 632.5 491.6 634.9 490.4 C637.3 489.2 639.7 488.1 642.1 487.2 C644.6 486.2 647.0 485.4 649.5 484.7 C651.9 484.0 654.3 483.4 656.7 483.0 C659.2 482.6 661.6 482.3 664.0 482.1 C666.3 482.0 668.7 482.0 671.0 482.1 C673.4 482.2 675.7 482.4 677.9 482.8 C680.2 483.2 682.4 483.7 684.6 484.3 C686.7 485.0 688.9 485.8 690.9 486.7 C693.0 487.6 695.0 488.6 696.9 489.8 C698.9 490.9 700.8 492.2 702.6 493.6 C704.4 495.0 706.1 496.5 707.8 498.2 C709.4 499.8 711.0 501.6 712.5 503.4 C714.0 505.3 715.4 507.3 716.7 509.3 C718.0 511.4 719.3 513.6 720.4 515.9 C721.6 518.1 722.6 520.5 723.6 522.9 C724.5 525.3 725.3 527.9 726.1 530.5 C726.8 533.1 727.5 535.7 728.0 538.5 C728.6 541.2 729.0 544.0 729.3 546.8 C729.7 549.7 729.9 552.6 730.0 555.5 C730.1 558.5 730.2 561.4 730.1 564.5 C730.0 567.5 729.8 570.5 729.5 573.6 C729.2 576.6 728.8 579.7 728.2 582.8 C727.7 585.9 727.1 589.0 726.4 592.1 C725.7 595.2 724.9 598.3 723.9 601.3 C723.0 604.4 722.0 607.5 720.9 610.5 C719.8 613.5 718.6 616.5 717.3 619.5 Z" fill="url(#gRim2)" stroke="#595753" stroke-width="1.5" stroke-linejoin="round" />
<path d="M626.5 702.4 C623.9 702.5 622.0 701.5 619.8 700.9 C617.7 700.2 615.5 699.4 613.5 698.5 C611.4 697.6 609.4 696.6 607.5 695.4 C605.5 694.3 603.6 693.0 601.8 691.6 C600.0 690.2 598.3 688.7 596.6 687.0 C595.0 685.4 593.4 683.6 591.9 681.8 C590.4 679.9 589.0 677.9 587.7 675.9 C586.4 673.8 585.1 671.6 584.0 669.3 C582.8 667.1 581.8 664.7 580.8 662.3 C579.9 659.9 579.1 657.3 578.3 654.7 C577.6 652.1 576.9 649.5 576.4 646.7 C575.8 644.0 575.4 641.2 575.1 638.4 C574.7 635.5 574.5 632.6 574.4 629.7 C574.3 626.7 574.2 623.8 574.3 620.7 C574.4 617.7 574.6 614.7 574.9 611.6 C575.2 608.6 575.6 605.5 576.2 602.4 C576.7 599.3 577.3 596.2 578.0 593.1 C578.7 590.0 579.5 586.9 580.5 583.9 C581.4 580.8 582.4 577.7 583.5 574.7 C584.6 571.7 585.8 568.7 587.1 565.7 C588.4 562.8 589.8 559.9 591.3 557.0 C592.8 554.1 594.3 551.3 596.0 548.6 C597.6 545.8 599.3 543.1 601.1 540.5 C602.9 537.9 604.8 535.3 606.7 532.9 C608.6 530.4 610.6 528.0 612.6 525.7 C614.7 523.4 616.8 521.2 619.0 519.1 C621.1 517.0 623.3 515.0 625.6 513.1 C627.8 511.2 630.1 509.4 632.4 507.7 C634.7 506.0 637.1 504.5 639.5 503.0 C641.8 501.6 644.3 500.2 646.7 499.0 C649.1 497.8 651.5 496.7 653.9 495.8 C656.4 494.8 658.8 494.0 661.3 493.3 C663.7 492.6 666.1 492.0 668.5 491.6 C671.0 491.2 673.4 490.9 675.8 490.7 C678.1 490.6 680.5 490.6 682.8 490.7 C685.2 490.8 687.5 491.0 689.7 491.4 C692.0 491.8 694.2 492.3 696.4 492.9 C698.5 493.6 700.7 494.4 702.7 495.3 C704.8 496.2 706.8 497.2 708.7 498.4 C710.7 499.5 712.6 500.8 714.4 502.2 C716.2 503.6 717.9 505.1 719.6 506.8 C721.2 508.4 722.8 510.2 724.3 512.0 C725.8 513.9 727.2 515.9 728.5 517.9 C729.8 520.0 731.1 522.2 732.2 524.5 C733.4 526.7 734.4 529.1 735.4 531.5 C736.3 533.9 737.1 536.5 737.9 539.1 C738.6 541.7 739.3 544.3 739.8 547.1 C740.4 549.8 740.8 552.6 741.1 555.4 C741.5 558.3 741.7 561.2 741.8 564.1 C741.9 567.1 742.0 570.0 741.9 573.1 C741.8 576.1 741.6 579.1 741.3 582.2 C741.0 585.2 740.6 588.3 740.0 591.4 C739.5 594.5 738.9 597.6 738.2 600.7 C737.5 603.8 736.7 606.9 735.7 609.9 C734.8 613.0 733.8 616.1 732.7 619.1 C731.6 622.1 730.6 624.2 729.1 628.1 C727.5 631.9 725.2 638.1 723.3 642.4 C721.4 646.7 720.8 649.9 717.7 653.9 C714.6 657.9 711.4 661.6 704.8 666.6 C698.1 671.6 686.8 678.9 677.8 683.6 C668.8 688.3 658.2 692.1 651.1 694.9 C644.0 697.7 639.4 699.1 635.3 700.4 C631.2 701.7 629.1 702.3 626.5 702.4 Z" fill="url(#gRim2)" stroke="#595753" stroke-width="0.9" stroke-linejoin="round" />
<path d="M628.7 699.8 C626.1 699.9 624.2 698.9 622.0 698.3 C619.9 697.6 617.7 696.8 615.7 695.9 C613.6 695.0 611.6 694.0 609.7 692.8 C607.7 691.7 605.8 690.4 604.0 689.0 C602.2 687.6 600.5 686.1 598.8 684.4 C597.2 682.8 595.6 681.0 594.1 679.2 C592.6 677.3 591.2 675.3 589.9 673.3 C588.6 671.2 587.3 669.0 586.2 666.7 C585.0 664.5 584.0 662.1 583.0 659.7 C582.1 657.3 581.3 654.7 580.5 652.1 C579.8 649.5 579.1 646.9 578.6 644.1 C578.0 641.4 577.6 638.6 577.3 635.8 C576.9 632.9 576.7 630.0 576.6 627.1 C576.5 624.1 576.4 621.2 576.5 618.1 C576.6 615.1 576.8 612.1 577.1 609.0 C577.4 606.0 577.8 602.9 578.4 599.8 C578.9 596.7 579.5 593.6 580.2 590.5 C580.9 587.4 581.7 584.3 582.7 581.3 C583.6 578.2 584.6 575.1 585.7 572.1 C586.8 569.1 588.0 566.1 589.3 563.1 C590.6 560.2 592.0 557.3 593.5 554.4 C595.0 551.5 596.5 548.7 598.2 546.0 C599.8 543.2 601.5 540.5 603.3 537.9 C605.1 535.3 607.0 532.7 608.9 530.3 C610.8 527.8 612.8 525.4 614.8 523.1 C616.9 520.8 619.0 518.6 621.2 516.5 C623.3 514.4 625.5 512.4 627.8 510.5 C630.0 508.6 632.3 506.8 634.6 505.1 C636.9 503.4 639.3 501.9 641.7 500.4 C644.0 499.0 646.5 497.6 648.9 496.4 C651.3 495.2 653.7 494.1 656.1 493.2 C658.6 492.2 661.0 491.4 663.5 490.7 C665.9 490.0 668.3 489.4 670.7 489.0 C673.2 488.6 675.6 488.3 678.0 488.1 C680.3 488.0 682.7 488.0 685.0 488.1 C687.4 488.2 689.7 488.4 691.9 488.8 C694.2 489.2 696.4 489.7 698.6 490.3 C700.7 491.0 702.9 491.8 704.9 492.7 C707.0 493.6 709.0 494.6 710.9 495.8 C712.9 496.9 714.8 498.2 716.6 499.6 C718.4 501.0 720.1 502.5 721.8 504.2 C723.4 505.8 725.0 507.6 726.5 509.4 C728.0 511.3 729.4 513.3 730.7 515.3 C732.0 517.4 733.3 519.6 734.4 521.9 C735.6 524.1 736.6 526.5 737.6 528.9 C738.5 531.3 739.3 533.9 740.1 536.5 C740.8 539.1 741.5 541.7 742.0 544.5 C742.6 547.2 743.0 550.0 743.3 552.8 C743.7 555.7 743.9 558.6 744.0 561.5 C744.1 564.5 744.2 567.4 744.1 570.5 C744.0 573.5 743.8 576.5 743.5 579.6 C743.2 582.6 742.8 585.7 742.2 588.8 C741.7 591.9 741.1 595.0 740.4 598.1 C739.7 601.2 738.9 604.3 737.9 607.3 C737.0 610.4 736.0 613.5 734.9 616.5 C733.8 619.5 732.8 621.6 731.3 625.5 C729.7 629.3 727.4 635.5 725.5 639.8 C723.6 644.1 723.0 647.3 719.9 651.3 C716.8 655.3 713.6 659.0 707.0 664.0 C700.4 669.0 689.0 676.3 680.0 681.0 C671.0 685.7 660.4 689.5 653.3 692.3 C646.2 695.1 641.6 696.5 637.5 697.8 C633.4 699.1 631.3 699.7 628.7 699.8 Z" fill="url(#gFace2)" stroke="#595753" stroke-width="0.9" stroke-linejoin="round" />
<path d="M643.7 685.0 C640.4 685.3 640.1 684.5 638.3 684.1 C636.5 683.7 634.8 683.2 633.0 682.5 C631.3 681.9 629.7 681.2 628.0 680.4 C626.4 679.5 624.8 678.6 623.3 677.5 C621.8 676.5 620.3 675.4 618.9 674.1 C617.5 672.9 616.1 671.5 614.8 670.1 C613.5 668.7 612.3 667.1 611.1 665.5 C610.0 663.9 608.9 662.2 607.8 660.5 C606.8 658.7 605.8 656.8 605.0 654.9 C604.1 653.0 603.3 651.0 602.5 648.9 C601.8 646.8 601.2 644.7 600.6 642.5 C600.0 640.3 599.5 638.1 599.1 635.8 C598.7 633.5 598.4 631.1 598.1 628.8 C597.9 626.4 597.7 624.0 597.7 621.5 C597.6 619.1 597.6 616.6 597.7 614.1 C597.8 611.6 598.0 609.0 598.2 606.5 C598.5 604.0 598.8 601.4 599.3 598.9 C599.7 596.3 600.2 593.8 600.8 591.2 C601.4 588.7 602.0 586.1 602.8 583.6 C603.5 581.1 604.4 578.6 605.3 576.1 C606.2 573.7 607.1 571.2 608.2 568.8 C609.2 566.4 610.4 564.0 611.5 561.7 C612.7 559.4 614.0 557.1 615.3 554.8 C616.6 552.6 618.0 550.4 619.4 548.3 C620.8 546.2 622.3 544.2 623.9 542.2 C625.4 540.2 627.0 538.3 628.6 536.5 C630.2 534.6 631.9 532.9 633.6 531.2 C635.4 529.5 637.1 528.0 638.9 526.5 C640.7 525.0 642.5 523.6 644.4 522.3 C646.2 520.9 648.1 519.7 650.0 518.6 C651.8 517.5 653.8 516.5 655.7 515.6 C657.6 514.7 659.5 513.9 661.4 513.2 C663.4 512.5 665.3 511.9 667.2 511.4 C669.2 510.9 671.1 510.5 673.0 510.3 C674.9 510.0 676.8 509.9 678.7 509.8 C680.6 509.8 682.4 509.9 684.3 510.0 C686.1 510.2 687.9 510.5 689.7 510.9 C691.5 511.3 693.2 511.8 695.0 512.5 C696.7 513.1 698.3 513.8 700.0 514.6 C701.6 515.5 703.2 516.4 704.7 517.5 C706.2 518.5 707.7 519.6 709.1 520.9 C710.5 522.1 711.9 523.5 713.2 524.9 C714.5 526.3 715.7 527.9 716.9 529.5 C718.0 531.1 719.1 532.8 720.2 534.5 C721.2 536.3 722.2 538.2 723.0 540.1 C723.9 542.0 724.7 544.0 725.5 546.1 C726.2 548.2 726.8 550.3 727.4 552.5 C728.0 554.7 728.5 556.9 728.9 559.2 C729.3 561.5 729.6 563.9 729.9 566.2 C730.1 568.6 730.3 571.0 730.3 573.5 C730.4 575.9 730.4 578.4 730.3 580.9 C730.2 583.4 730.0 586.0 729.8 588.5 C729.5 591.0 729.2 593.6 728.7 596.1 C728.3 598.7 727.8 601.2 727.2 603.8 C726.6 606.3 726.0 608.9 725.2 611.4 C724.5 613.9 724.3 615.9 722.7 618.9 C721.2 621.8 718.8 625.5 716.0 629.0 C713.2 632.5 708.9 636.1 705.7 639.8 C702.5 643.5 700.9 646.7 696.8 651.3 C692.7 655.9 685.8 663.4 681.3 667.5 C676.8 671.6 673.9 673.5 670.0 676.0 C666.1 678.5 662.4 680.8 658.0 682.3 C653.6 683.8 647.0 684.7 643.7 685.0 Z" fill="#c2c0bb" stroke="#595753" stroke-width="1.2" stroke-linejoin="round" />
<path d="M644.8 679.6 C641.9 679.9 641.5 679.2 639.9 678.8 C638.3 678.4 636.7 677.9 635.2 677.3 C633.6 676.8 632.1 676.1 630.7 675.3 C629.2 674.5 627.8 673.6 626.4 672.6 C625.0 671.7 623.7 670.6 622.4 669.4 C621.1 668.2 619.9 667.0 618.7 665.6 C617.5 664.3 616.4 662.9 615.3 661.4 C614.3 659.8 613.3 658.2 612.4 656.6 C611.4 654.9 610.6 653.2 609.8 651.4 C609.0 649.5 608.2 647.7 607.6 645.7 C606.9 643.8 606.3 641.8 605.8 639.7 C605.3 637.7 604.8 635.5 604.5 633.4 C604.1 631.2 603.8 629.0 603.6 626.8 C603.4 624.6 603.2 622.3 603.2 620.0 C603.1 617.7 603.1 615.3 603.2 613.0 C603.3 610.6 603.4 608.2 603.7 605.9 C603.9 603.5 604.2 601.1 604.6 598.7 C605.0 596.3 605.4 593.9 606.0 591.5 C606.5 589.1 607.1 586.7 607.8 584.3 C608.5 582.0 609.2 579.6 610.0 577.3 C610.9 575.0 611.7 572.7 612.7 570.4 C613.6 568.2 614.6 565.9 615.7 563.7 C616.8 561.5 617.9 559.4 619.1 557.3 C620.3 555.2 621.5 553.2 622.8 551.2 C624.1 549.2 625.5 547.3 626.9 545.4 C628.2 543.5 629.7 541.7 631.2 540.0 C632.6 538.3 634.2 536.7 635.7 535.1 C637.3 533.5 638.9 532.0 640.5 530.6 C642.1 529.2 643.7 527.9 645.4 526.7 C647.1 525.4 648.8 524.3 650.5 523.2 C652.2 522.2 653.9 521.2 655.6 520.4 C657.4 519.5 659.1 518.8 660.9 518.1 C662.6 517.5 664.4 516.9 666.1 516.5 C667.9 516.0 669.6 515.7 671.3 515.4 C673.1 515.2 674.8 515.0 676.5 515.0 C678.2 514.9 679.9 515.0 681.5 515.2 C683.2 515.4 684.9 515.6 686.5 516.0 C688.1 516.4 689.7 516.9 691.2 517.5 C692.7 518.0 694.3 518.7 695.7 519.5 C697.2 520.3 698.6 521.2 700.0 522.2 C701.4 523.1 702.7 524.2 704.0 525.4 C705.3 526.5 706.5 527.8 707.7 529.2 C708.9 530.5 710.0 531.9 711.0 533.4 C712.1 535.0 713.1 536.5 714.0 538.2 C715.0 539.9 715.8 541.6 716.6 543.4 C717.4 545.3 718.2 547.1 718.8 549.1 C719.5 551.0 720.1 553.0 720.6 555.1 C721.1 557.1 721.5 559.3 721.9 561.4 C722.3 563.6 722.6 565.8 722.8 568.0 C723.0 570.2 723.2 572.5 723.2 574.8 C723.3 577.1 723.3 579.5 723.2 581.8 C723.1 584.2 723.0 586.6 722.7 588.9 C722.5 591.3 722.2 593.7 721.8 596.1 C721.4 598.5 720.9 600.9 720.4 603.3 C719.9 605.7 719.3 608.1 718.6 610.4 C717.9 612.8 717.7 614.7 716.3 617.5 C715.0 620.3 712.8 623.7 710.2 627.0 C707.7 630.3 703.8 633.7 700.9 637.2 C698.0 640.7 696.6 643.6 692.9 648.0 C689.2 652.3 682.9 659.3 678.8 663.2 C674.8 667.1 672.1 668.9 668.6 671.2 C665.1 673.5 661.7 675.7 657.8 677.1 C653.8 678.5 647.8 679.3 644.8 679.6 Z" fill="url(#gRec2)" stroke="#6f6d69" stroke-width="0.9" stroke-linejoin="round" />
</g>
<g id="fdetails">
<linearGradient id="gWall" x1="0" y1="0" x2="1" y2="0"><stop offset="0" stop-color="#696764"/><stop offset="0.55" stop-color="#7a7874"/><stop offset="1" stop-color="#8c8a86"/></linearGradient>
<path d="M701.9 529.0 C703.8 528.1 703.9 528.3 706.0 529.8 C708.1 531.2 712.1 534.1 714.7 537.7 C717.3 541.4 720.1 546.3 721.7 551.7 C723.4 557.1 724.2 564.5 724.6 570.0 C725.0 575.5 724.8 580.3 724.0 585.0 C723.2 589.7 721.7 594.5 720.0 598.0 C718.3 601.5 715.8 605.3 714.0 606.0 C712.2 606.7 710.2 603.7 709.0 602.0 C707.8 600.3 707.6 599.3 706.8 596.0 C706.0 592.7 705.4 586.7 704.0 582.0 C702.6 577.3 700.2 572.8 698.4 568.0 C696.6 563.2 694.2 556.9 693.0 553.0 C691.8 549.1 691.1 547.6 691.4 544.7 C691.7 541.8 693.1 538.0 694.9 535.4 C696.6 532.8 700.0 529.9 701.9 529.0 Z" fill="url(#gWall)" stroke="#595753" stroke-width="0.9" stroke-linejoin="round" />
<path d="M702.2 530.7 C704.1 532.2 705.4 540.0 706.5 544.7 C707.6 549.4 708.4 554.5 708.9 558.7 C709.4 562.9 709.7 565.0 709.8 570.0 C709.9 575.0 710.0 584.6 709.6 589.0 C709.2 593.4 708.4 597.7 707.5 596.5 C706.6 595.3 705.5 586.8 704.0 582.0 C702.5 577.2 700.2 572.8 698.4 568.0 C696.6 563.2 694.1 556.9 693.0 553.0 C691.9 549.1 691.2 547.6 691.6 544.7 C692.0 541.8 693.4 537.9 695.2 535.6 C697.0 533.3 700.3 529.2 702.2 530.7 Z" fill="#ffffff" stroke="#5b5955" stroke-width="0.7" stroke-linejoin="round" />
<path d="M708.0 532.0 C709.3 534.2 714.1 539.5 716.0 545.0 C717.9 550.5 719.2 557.8 719.5 565.0 C719.8 572.2 719.1 581.8 718.0 588.0 C716.9 594.2 713.8 599.7 713.0 602.0" fill="none" stroke="#66645f" stroke-width="0.7" stroke-linejoin="round" />
<linearGradient id="gSlotL" gradientUnits="userSpaceOnUse" x1="610" y1="600" x2="634" y2="606"><stop offset="0" stop-color="#b9b7b2"/><stop offset="0.45" stop-color="#d8d6d1"/><stop offset="1" stop-color="#bfbdb8"/></linearGradient>
<path d="M620.3 556.7 C623.3 553.1 625.4 552.4 627.9 552.9 C630.4 553.4 634.5 556.1 635.5 559.7 C636.5 563.4 635.5 570.5 634.0 574.8 C632.5 579.1 628.3 580.7 626.4 585.5 C624.5 590.3 622.9 597.6 622.6 603.6 C622.3 609.6 623.4 616.7 624.8 621.8 C626.2 626.9 629.9 630.2 631.0 634.0 C632.1 637.8 632.7 640.5 631.7 644.5 C630.7 648.5 627.4 655.4 624.8 658.2 C622.1 661.0 618.6 662.2 615.8 661.2 C613.0 660.2 610.6 658.1 608.2 652.0 C605.8 645.9 602.3 633.9 601.4 624.8 C600.5 615.7 601.5 605.9 602.9 597.6 C604.3 589.3 606.8 581.6 609.7 574.8 C612.6 568.0 617.3 560.4 620.3 556.7 Z" fill="url(#gSlotL)" stroke="#595753" stroke-width="1.1" stroke-linejoin="round" />
<path d="M621.8 559.2 C622.3 559.8 623.1 558.9 622.6 562.0 C622.1 565.1 620.4 572.8 618.8 578.0 C617.1 583.2 614.0 587.2 612.7 593.0 C611.4 598.8 610.8 606.9 611.2 612.7 C611.6 618.5 613.9 623.9 615.0 627.9 C616.1 631.9 617.6 634.0 618.0 637.0 C618.4 640.0 618.4 643.4 617.3 646.0 C616.2 648.6 612.7 652.0 611.2 652.9 C609.7 653.8 610.0 656.2 608.4 651.5 C606.8 646.8 602.7 633.8 601.9 624.8 C601.1 615.8 602.0 605.9 603.4 597.6 C604.8 589.3 607.5 581.6 610.2 575.0 C612.9 568.4 617.9 560.8 619.8 558.2 C621.7 555.6 621.3 558.6 621.8 559.2 Z" fill="#0d0d0d" stroke="none" stroke-width="1.5" stroke-linejoin="round" />
<path d="M623.3 574.8 L634.3 575.2 M616.5 646 L627 653" fill="none" stroke="#6f6d67" stroke-width="0.9" stroke-linejoin="round" />
<path d="M624.5 566 L635 567" fill="none" stroke="#8a8883" stroke-width="0.7" stroke-linejoin="round" />
<ellipse cx="625.5" cy="540.5" rx="2.4" ry="1.5" fill="#cfe6f2" transform="rotate(-40 625.5 540.5)"/><ellipse cx="627" cy="581.8" rx="1.6" ry="2.2" fill="#d9eef6"/>
<ellipse cx="664.4" cy="542.4" rx="13.2" ry="18.2" transform="rotate(20.5 664.4 542.4)" fill="#7d7b77" stroke="#4d4b48" stroke-width="1.5" />
</g>
<g id="hub">
<ellipse cx="660.5" cy="597.5" rx="24.0" ry="37.5" transform="rotate(22.1 660.5 597.5)" fill="#cfccc6" stroke="#595753" stroke-width="0.9" />
<ellipse cx="661.4" cy="597.9" rx="21.8" ry="34.0" transform="rotate(22.1 661.4 597.9)" fill="url(#gShaft)" stroke="#595753" stroke-width="1.3" />
<path d="M674.2 566.4 L690.0 572.8 L664.4 635.8 L648.6 629.4 Z" fill="url(#gShaft)" stroke="none" stroke-width="1.5" stroke-linejoin="round" />
<path d="M674.2 566.4 L690.0 572.8 M664.4 635.8 L648.6 629.4" fill="none" stroke="#595753" stroke-width="1.3" stroke-linejoin="round" />
<ellipse cx="677.2" cy="604.3" rx="21.8" ry="34.0" transform="rotate(22.1 677.2 604.3)" fill="#d3d0ca" stroke="#595753" stroke-width="1.3" />
<ellipse cx="678.1" cy="604.6" rx="19.8" ry="31.0" transform="rotate(22.1 678.1 604.6)" fill="#d9d6d0" stroke="#595753" stroke-width="1.3" />
<ellipse cx="679.0" cy="605.0" rx="18.2" ry="28.5" transform="rotate(22.1 679.0 605.0)" fill="url(#gShaft)" stroke="#595753" stroke-width="1.3" />
<path d="M689.8 578.6 L694.4 580.5 L672.9 633.3 L668.3 631.4 Z" fill="url(#gShaft)" stroke="none" stroke-width="1.5" stroke-linejoin="round" />
<path d="M689.8 578.6 L694.4 580.5 M672.9 633.3 L668.3 631.4" fill="none" stroke="#595753" stroke-width="1.3" stroke-linejoin="round" />
<ellipse cx="683.7" cy="606.9" rx="18.2" ry="28.5" transform="rotate(22.1 683.7 606.9)" fill="#cfccc6" stroke="#595753" stroke-width="1.3" />
<ellipse cx="684.6" cy="607.3" rx="16.0" ry="25.0" transform="rotate(22.1 684.6 607.3)" fill="#d6d3cd" stroke="#595753" stroke-width="1.3" />
<ellipse cx="685.5" cy="607.7" rx="14.1" ry="22.0" transform="rotate(22.1 685.5 607.7)" fill="url(#gShaft)" stroke="#595753" stroke-width="1.1" />
<path d="M693.8 587.3 L728.4 603.0 L713.0 640.9 L677.2 628.0 Z" fill="url(#gShaft)" stroke="none" stroke-width="1.5" stroke-linejoin="round" />
<path d="M693.8 587.3 L728.4 603.0 M713.0 640.9 L677.2 628.0" fill="none" stroke="#595753" stroke-width="1.1" stroke-linejoin="round" />
<ellipse cx="720.7" cy="622.0" rx="13.1" ry="20.5" transform="rotate(22.1 720.7 622.0)" fill="#d0cdc7" stroke="#595753" stroke-width="1.1" />
<ellipse cx="721.2" cy="622.1" rx="10.6" ry="16.5" transform="rotate(22.1 721.2 622.1)" fill="#dcd9d3" stroke="#595753" stroke-width="1.3" />
<ellipse cx="721.7" cy="622.3" rx="9.0" ry="14.0" transform="rotate(22.1 721.7 622.3)" fill="url(#gShaft)" stroke="#595753" stroke-width="1.3" />
<path d="M726.9 609.4 L747.3 620.3 L738.6 641.6 L716.4 635.3 Z" fill="url(#gShaft)" stroke="none" stroke-width="1.5" stroke-linejoin="round" />
<path d="M726.9 609.4 L747.3 620.3 M738.6 641.6 L716.4 635.3" fill="none" stroke="#595753" stroke-width="1.3" stroke-linejoin="round" />
<ellipse cx="743.0" cy="631.0" rx="7.4" ry="11.5" transform="rotate(22.1 743.0 631.0)" fill="#cbc8c2" stroke="#595753" stroke-width="1.3" />
<path d="M747.0 621.0 L748.9 621.7 L740.8 641.7 L738.9 641.0 Z" fill="url(#gShaft)" stroke="none" stroke-width="1.5" stroke-linejoin="round" />
<path d="M747.0 621.0 L748.9 621.7 M740.8 641.7 L738.9 641.0" fill="none" stroke="#595753" stroke-width="1.3" stroke-linejoin="round" />
<ellipse cx="744.8" cy="631.7" rx="6.9" ry="10.8" transform="rotate(22.1 744.8 631.7)" fill="#d3d0ca" stroke="#595753" stroke-width="1.3" />
<ellipse cx="744.8" cy="631.7" rx="6.0" ry="9.3" transform="rotate(22.1 744.8 631.7)" fill="url(#gShaft)" stroke="#595753" stroke-width="1.1" />
<path d="M748.3 623.1 L766.7 630.9 L760.0 647.6 L741.3 640.4 Z" fill="url(#gShaft)" stroke="none" stroke-width="1.5" stroke-linejoin="round" />
<path d="M748.3 623.1 L766.7 630.9 M760.0 647.6 L741.3 640.4" fill="none" stroke="#595753" stroke-width="1.1" stroke-linejoin="round" />
<ellipse cx="763.3" cy="639.3" rx="5.8" ry="9.0" transform="rotate(22.1 763.3 639.3)" fill="#c9c7c2" stroke="#595753" stroke-width="1.1" />
</g>
<g id="piston">
<path d="M789.8 240 L792.6 282.5 C800 287 815 292 830.7 295.5 C850 300 868 303 881.7 303.9 C884 298 885.5 292 886.3 288 C887 282 888 277 890 273.2 C894 271 899 270.5 905 270.5 L905 250 Z" fill="url(#gPSkirt)" stroke="#7a4a22" stroke-width="1.6" stroke-linejoin="round" />
<path d="M890 273.2 C894 271 899 270.5 905 270.5 L912 270 C903 274 896 282 893 290 C891 286 889 280 890 273.2 Z" fill="#c27d44" stroke="#7a4a22" stroke-width="0.7" stroke-linejoin="round" />
<path d="M922.5 266 L922.5 272.3 C924 277 927 280 929 280.7 C940 283 950 285 960.5 287 C970 290 978 293 986 295 L996 290 L996 262 Z" fill="#dc975d" stroke="#7a4a22" stroke-width="1.4" stroke-linejoin="round" />
<path d="M938 268 C944 276 952 282 962 287 M950 268 C958 272 966 280 972 286 M930 276 C945 274 962 276 976 274" fill="none" stroke="#8a5a30" stroke-width="0.8" stroke-linejoin="round" />
<ellipse cx="991.0" cy="280.0" rx="12.3" ry="15.0" transform="rotate(4 991.0 280.0)" fill="#e4a169" stroke="#7a4a22" stroke-width="1.5" />
<ellipse cx="989.5" cy="279.0" rx="8.3" ry="10.5" transform="rotate(4 989.5 279.0)" fill="#d08a50" stroke="#7a4a22" stroke-width="1.3" />
<ellipse cx="988.8" cy="278.6" rx="6.6" ry="8.6" transform="rotate(4 988.8 278.6)" fill="#dd985f" stroke="#9a6536" stroke-width="0.6" />
<path d="M1024 256 L1031 258 L1030 262 L1026 261 Z" fill="#b87840" stroke="#7a4a22" stroke-width="0.8" stroke-linejoin="round" />
<path d="M785 207 C784.6 222 784.8 236 786 243 C800 262 860 271 925 271 C985 271 1030 262 1045 247 C1047 238 1047 222 1047 210 C1040 230 985 236.5 916 236.5 C847 235 790 226 785 207 Z" fill="url(#gPSide)" stroke="#7a4a22" stroke-width="1.6" stroke-linejoin="round" />
<path d="M786 219.4 C798 237.4 852 244.4 916 244.9 C984 244.9 1036 237.4 1046.5 222.4" fill="none" stroke="#f0b583" stroke-width="1.6" transform="translate(0,1.9)"/>
<path d="M786 219.4 C798 237.4 852 244.4 916 244.9 C984 244.9 1036 237.4 1046.5 222.4" fill="none" stroke="#7d4a1c" stroke-width="2.3"/>
<path d="M786 228.0 C798 246.0 852 253.0 916 253.5 C984 253.5 1036 246.0 1046.5 231.0" fill="none" stroke="#f0b583" stroke-width="1.6" transform="translate(0,1.9)"/>
<path d="M786 228.0 C798 246.0 852 253.0 916 253.5 C984 253.5 1036 246.0 1046.5 231.0" fill="none" stroke="#7d4a1c" stroke-width="2.3"/>
<path d="M786 237.0 C798 255.0 852 262.0 916 262.5 C984 262.5 1036 255.0 1046.5 240.0" fill="none" stroke="#f0b583" stroke-width="1.6" transform="translate(0,1.9)"/>
<path d="M786 237.0 C798 255.0 852 262.0 916 262.5 C984 262.5 1036 255.0 1046.5 240.0" fill="none" stroke="#7d4a1c" stroke-width="2.3"/>
<ellipse cx="916.0" cy="207.5" rx="131.0" ry="28.3" transform="rotate(0.7 916.0 207.5)" fill="#e7a97a" stroke="#7a4a22" stroke-width="1.8" />
<ellipse cx="916.0" cy="208.0" rx="127.5" ry="26.3" transform="rotate(0.7 916.0 208.0)" fill="none" stroke="#a86a38" stroke-width="0.9" />
<path d="M795.4 205.3 C800 199 820 196.5 840 196 C856 196 868 197.5 875 200.6 L828.8 213.6 C815 214 797 211 795.4 205.3 Z" fill="#ebb68c" stroke="#7a4a22" stroke-width="1.4" stroke-linejoin="round" />
<path d="M856.6 188 C862 183.5 880 181 897 181.3 C915 181.5 932 183.5 940 186.7 L893.7 198.8 C880 199.5 868 198 862 196 C857 193.5 855.5 190.5 856.6 188 Z" fill="#ebb68c" stroke="#7a4a22" stroke-width="1.4" stroke-linejoin="round" />
<path d="M888.2 225.7 L942 213.6 C955 214.5 968 218 975.4 226 C972 231 958 233 942 233.2 C925 233.5 908 232.5 901 231 C893 229.5 888.5 227.5 888.2 225.7 Z" fill="#ebb68c" stroke="#7a4a22" stroke-width="1.4" stroke-linejoin="round" />
<path d="M953 209.9 L999.5 198.8 C1012 199.5 1030 203 1038.5 210 C1036 214.5 1022 216.5 1006 217 C995 217.3 986 217 979 216.4 C972 214.5 962 211.5 953 209.9 Z" fill="#ebb68c" stroke="#7a4a22" stroke-width="1.4" stroke-linejoin="round" />
<path d="M795.4 205.3 C800 199 820 196.5 840 196 C856 196 868 197.5 875 200.6" fill="none" stroke="#6e411a" stroke-width="2.0" stroke-linejoin="round" />
<path d="M799.5 206.3 C804 201.5 822 199 840 198.6 C853 198.6 863 199.6 869 201.6" fill="none" stroke="#9a6536" stroke-width="0.8" stroke-linejoin="round" />
<path d="M856.6 188 C862 183.5 880 181 897 181.3 C915 181.5 932 183.5 940 186.7" fill="none" stroke="#6e411a" stroke-width="2.0" stroke-linejoin="round" />
<path d="M861 189 C866 185.5 882 183.6 897 183.8 C912 184 926 185.4 933 187.6" fill="none" stroke="#9a6536" stroke-width="0.8" stroke-linejoin="round" />
<path d="M942 213.6 C955 214.5 968 218 975.4 226 C972 231 958 233 942 233.2 C925 233.5 908 232.5 901 231 C893 229.5 888.5 227.5 888.2 225.7" fill="none" stroke="#6e411a" stroke-width="1.9" stroke-linejoin="round" />
<path d="M999.5 198.8 C1012 199.5 1030 203 1038.5 210 C1036 214.5 1022 216.5 1006 217" fill="none" stroke="#6e411a" stroke-width="1.9" stroke-linejoin="round" />
<path d="M800 194 C810 192 830 191.8 853 191.3 C852 188 853 185 856.6 183 C860 181.8 862 182.5 862.5 183.5" fill="none" stroke="#6e411a" stroke-width="2.8" stroke-linejoin="round" stroke-linecap="round"/>
<path d="M853 191.3 C860 193 868 196.5 876 200.5" fill="none" stroke="#6e411a" stroke-width="1.4" stroke-linejoin="round" />
<path d="M974.4 229.4 C978 227.5 981 225.5 984.6 223.8 C983.5 221 981.5 218.5 979 216.4 M984.6 223.8 C1000 221.5 1022 218 1034.7 214.5" fill="none" stroke="#6e411a" stroke-width="2.6" stroke-linejoin="round" stroke-linecap="round"/>
<path d="M942 213.6 C955 212 966 215 974 220" fill="none" stroke="#6e411a" stroke-width="1.2" stroke-linejoin="round" />
</g>
<g id="ppin">
<path d="M906 305.6 C899 306 897.3 321 900.5 328.5 C901.5 330.8 903 331.8 905 332 L1048 366.6 C1055 366 1058 360 1058 352 C1058 345 1055 340 1050 339.5 Z" fill="url(#gPin)" stroke="#4f4f4e" stroke-width="1.4" stroke-linejoin="round" />
<ellipse cx="1050.0" cy="353.0" rx="7.6" ry="13.6" transform="rotate(13 1050.0 353.0)" fill="#858583" stroke="#4a4a49" stroke-width="1.5" />
<ellipse cx="1050.3" cy="353.3" rx="4.6" ry="8.4" transform="rotate(13 1050.3 353.3)" fill="#8f8f8d" stroke="#4a4a49" stroke-width="1.2" />
</g>
</svg>
  
  
  <div class="abs" id="timeline"></div>
  <svg class="abs" style="left:0;top:0;filter:blur(0.3px)" width="1536" height="857" viewBox="0 0 1536 857">
<text x="316.5" y="22.1" font-size="9.2" fill="#5c5c5c" font-weight="normal" textLength="93.1" lengthAdjust="spacingAndGlyphs" font-family="Liberation Sans, sans-serif" >Engine Assembly v4*</text>
<text x="733.6" y="22.2" font-size="9.2" fill="#8f8f8f" font-weight="normal" textLength="67.0" lengthAdjust="spacingAndGlyphs" font-family="Liberation Sans, sans-serif" >Contact Sets v1</text>
<text x="1130.0" y="22.2" font-size="9.2" fill="#8f8f8f" font-weight="normal" textLength="83.0" lengthAdjust="spacingAndGlyphs" font-family="Liberation Sans, sans-serif" >Bolted Location v2*</text>
<text x="123.4" y="41.5" font-size="8.3" fill="#5a9fd6" font-weight="normal" textLength="23.8" lengthAdjust="spacingAndGlyphs" font-family="Liberation Sans, sans-serif" >SOLID</text>
<text x="185.5" y="41.5" font-size="8.3" fill="#6e6e6e" font-weight="normal" textLength="36.2" lengthAdjust="spacingAndGlyphs" font-family="Liberation Sans, sans-serif" >SURFACE</text>
<text x="260.0" y="41.5" font-size="8.3" fill="#6e6e6e" font-weight="normal" textLength="21.7" lengthAdjust="spacingAndGlyphs" font-family="Liberation Sans, sans-serif" >MESH</text>
<text x="319.0" y="41.5" font-size="8.3" fill="#6e6e6e" font-weight="normal" textLength="53.0" lengthAdjust="spacingAndGlyphs" font-family="Liberation Sans, sans-serif" >SHEET METAL</text>
<text x="409.5" y="41.5" font-size="8.3" fill="#6e6e6e" font-weight="normal" textLength="32.8" lengthAdjust="spacingAndGlyphs" font-family="Liberation Sans, sans-serif" >PLASTIC</text>
<text x="480.2" y="41.5" font-size="8.3" fill="#6e6e6e" font-weight="normal" textLength="34.5" lengthAdjust="spacingAndGlyphs" font-family="Liberation Sans, sans-serif" >UTILITIES</text>
<text x="550.7" y="41.5" font-size="8.3" fill="#6e6e6e" font-weight="normal" textLength="35.5" lengthAdjust="spacingAndGlyphs" font-family="Liberation Sans, sans-serif" >MANAGE</text>
<text x="191.4" y="89.6" font-size="8.3" fill="#5c5c5c" font-weight="normal" textLength="29.9" lengthAdjust="spacingAndGlyphs" font-family="Liberation Sans, sans-serif" >CREATE</text>
<path d="M225.3 85.5h3.8l-1.9 2.6z" fill="#444"/>
<text x="331.2" y="89.6" font-size="8.3" fill="#5c5c5c" font-weight="normal" textLength="42.9" lengthAdjust="spacingAndGlyphs" font-family="Liberation Sans, sans-serif" >AUTOMATE</text>
<path d="M378.1 85.5h3.8l-1.9 2.6z" fill="#444"/>
<text x="499.7" y="89.6" font-size="8.3" fill="#5c5c5c" font-weight="normal" textLength="29.1" lengthAdjust="spacingAndGlyphs" font-family="Liberation Sans, sans-serif" >MODIFY</text>
<path d="M532.8 85.5h3.8l-1.9 2.6z" fill="#444"/>
<text x="674.5" y="89.6" font-size="8.3" fill="#5c5c5c" font-weight="normal" textLength="42.7" lengthAdjust="spacingAndGlyphs" font-family="Liberation Sans, sans-serif" >ASSEMBLE</text>
<path d="M721.2 85.5h3.8l-1.9 2.6z" fill="#444"/>
<text x="767.5" y="89.6" font-size="8.3" fill="#5c5c5c" font-weight="normal" textLength="45.9" lengthAdjust="spacingAndGlyphs" font-family="Liberation Sans, sans-serif" >CONFIGURE</text>
<path d="M817.4 85.5h3.8l-1.9 2.6z" fill="#444"/>
<text x="846.5" y="89.6" font-size="8.3" fill="#5c5c5c" font-weight="normal" textLength="48.6" lengthAdjust="spacingAndGlyphs" font-family="Liberation Sans, sans-serif" >CONSTRUCT</text>
<path d="M899.1 85.5h3.8l-1.9 2.6z" fill="#444"/>
<text x="935.3" y="89.6" font-size="8.3" fill="#5c5c5c" font-weight="normal" textLength="31.1" lengthAdjust="spacingAndGlyphs" font-family="Liberation Sans, sans-serif" >INSPECT</text>
<path d="M970.4 85.5h3.8l-1.9 2.6z" fill="#444"/>
<text x="1051.5" y="89.6" font-size="8.3" fill="#5c5c5c" font-weight="normal" textLength="26.8" lengthAdjust="spacingAndGlyphs" font-family="Liberation Sans, sans-serif" >INSERT</text>
<path d="M1082.3 85.5h3.8l-1.9 2.6z" fill="#444"/>
<text x="1154.4" y="89.6" font-size="8.3" fill="#5c5c5c" font-weight="normal" textLength="28.6" lengthAdjust="spacingAndGlyphs" font-family="Liberation Sans, sans-serif" >SELECT</text>
<path d="M1187.0 85.5h3.8l-1.9 2.6z" fill="#444"/>
<text x="36.1" y="65.1" font-size="9.2" fill="#3f3f3f" font-weight="normal" textLength="29.9" lengthAdjust="spacingAndGlyphs" font-family="Liberation Sans, sans-serif" stroke="#3f3f3f" stroke-width="0.3">DESIGN</text>
<path d="M70.8 60.8h4.2l-2.1 2.8z" fill="#333"/>
<rect x="6" y="101.5" width="240" height="18.8" fill="#efefef" stroke="#e4e4e4" stroke-width="0.8"/>
<path d="M13.2 108.2l-3.6 2.6l3.6 2.6zM17.6 108.2l-3.6 2.6l3.6 2.6z" fill="#3a3a3a"/>
<text x="25.7" y="113.9" font-size="8.3" fill="#9a9a9a" font-weight="normal" textLength="41.3" lengthAdjust="spacingAndGlyphs" font-family="Liberation Sans, sans-serif" >BROWSER</text>
<circle cx="233" cy="111" r="3.4" fill="#2e2e2e"/><rect x="231" y="110.5" width="4" height="1" fill="#bbb"/>
<path d="M27.8 129.3v9.400h-8.200z" fill="#555"/><path d="M26.200 132.9v4.200h-3.600z" fill="#d8d8d8"/>
<rect x="35" y="127.30000000000001" width="19.5" height="13" fill="#f3f3f3"/>
<path d="M37.8 133.9c2.6-4.2 9-4.2 11.6 0c-2.600 4.200-9 4.200-11.600 0z" fill="#b9b9b9" stroke="#8f8f8f" stroke-width="1"/>
<circle cx="43.599999999999994" cy="133.9" r="2.1" fill="#8a8a8a"/>
<rect x="54.5" y="127.2" width="123" height="12.700" fill="#8f8f8f"/>
<rect x="58.200" y="128.5" width="6" height="10.400" rx="1" fill="#fff"/><rect x="62.600" y="133.1" width="6" height="5.800" rx="1.300" fill="#fff" stroke="#8f8f8f" stroke-width="0.900"/>
<text x="81.0" y="136.8" font-size="8.6" fill="#ffffff" font-weight="bold" textLength="89.0" lengthAdjust="spacingAndGlyphs" font-family="Liberation Sans, sans-serif" >Engine Assembly v4</text>
<rect x="177.5" y="127.2" width="38" height="13" fill="#f3f3f3"/>
<circle cx="186.200" cy="133.70000000000002" r="5.200" fill="#e8dc4a" stroke="#bdb12e" stroke-width="0.800"/><path d="M184 131.70000000000002h4.400v3.400l-2.200 1.600l-2.200-1.600z" fill="#f8f4c0"/><circle cx="189.800" cy="137.3" r="1.700" fill="#fff" stroke="#8a8a2a" stroke-width="0.700"/>
<circle cx="203.300" cy="133.9" r="4.800" fill="#fff" stroke="#4a4a4a" stroke-width="1.100"/><circle cx="203.300" cy="133.9" r="1.900" fill="#333"/>
<rect x="48.800" y="145.8" width="104.2" height="14.600" fill="#f5f5f5"/>
<path d="M35 148.47v9.2l6.6-4.6z" fill="#fdfdfd" stroke="#6c6c6c" stroke-width="1.3" stroke-linejoin="round"/>
<circle cx="56.300" cy="153.1" r="3.600" fill="none" stroke="#636363" stroke-width="2.200"/><circle cx="56.300" cy="153.1" r="5" fill="none" stroke="#636363" stroke-width="1.600" stroke-dasharray="1.900 2.030"/>
<text x="72.0" y="156.0" font-size="8.3" fill="#4c4c4c" font-weight="normal" textLength="72.0" lengthAdjust="spacingAndGlyphs" font-family="Liberation Sans, sans-serif" >Document Settings</text>
<rect x="48.800" y="164.9" width="90.2" height="14.600" fill="#f5f5f5"/>
<path d="M35 167.64000000000001v9.2l6.6-4.6z" fill="#fdfdfd" stroke="#6c6c6c" stroke-width="1.3" stroke-linejoin="round"/>
<path d="M51.2 167.84h4.600l1 1.200h7.200v7.800h-12.800z" fill="#8c8c8c"/><path d="M57.400000000000006 169.84v6.800" stroke="#a9a9a9" stroke-width="0.600"/>
<text x="75.7" y="175.1" font-size="8.3" fill="#4c4c4c" font-weight="normal" textLength="54.3" lengthAdjust="spacingAndGlyphs" font-family="Liberation Sans, sans-serif" >Named Views</text>
<rect x="48.800" y="184.1" width="77.7" height="14.600" fill="#f5f5f5"/>
<path d="M35 186.81000000000003v9.2l6.6-4.6z" fill="#fdfdfd" stroke="#6c6c6c" stroke-width="1.3" stroke-linejoin="round"/>
<path d="M52 191.41000000000003c2.6-4.2 9-4.2 11.6 0c-2.600 4.200-9 4.200-11.600 0z" fill="#f6f6f6" stroke="#c9c9c9" stroke-width="1"/>
<circle cx="57.8" cy="191.41000000000003" r="2.1" fill="#e4e4e4"/>
<path d="M71.6 187.01000000000002h4.600l1 1.200h7.200v7.800h-12.800z" fill="#8c8c8c"/><path d="M77.8 189.01000000000002v6.800" stroke="#a9a9a9" stroke-width="0.600"/>
<text x="95.8" y="194.3" font-size="8.3" fill="#4c4c4c" font-weight="normal" textLength="21.7" lengthAdjust="spacingAndGlyphs" font-family="Liberation Sans, sans-serif" >Origin</text>
<rect x="48.800" y="203.3" width="89.0" height="14.600" fill="#f5f5f5"/>
<path d="M35 205.98000000000002v9.2l6.6-4.6z" fill="#fdfdfd" stroke="#6c6c6c" stroke-width="1.3" stroke-linejoin="round"/>
<path d="M52 210.58c2.6-4.2 9-4.2 11.6 0c-2.600 4.200-9 4.200-11.600 0z" fill="#b9b9b9" stroke="#8f8f8f" stroke-width="1"/>
<circle cx="57.8" cy="210.58" r="2.1" fill="#8a8a8a"/>
<path d="M71.6 206.18h4.600l1 1.200h7.200v7.800h-12.800z" fill="#8c8c8c"/><path d="M77.8 208.18v6.800" stroke="#a9a9a9" stroke-width="0.600"/>
<text x="95.8" y="213.5" font-size="8.3" fill="#4c4c4c" font-weight="normal" textLength="33.0" lengthAdjust="spacingAndGlyphs" font-family="Liberation Sans, sans-serif" >Analysis</text>
<rect x="48.800" y="222.4" width="77.7" height="14.600" fill="#f5f5f5"/>
<path d="M35 225.15v9.2l6.6-4.6z" fill="#fdfdfd" stroke="#6c6c6c" stroke-width="1.3" stroke-linejoin="round"/>
<path d="M52 229.75c2.6-4.2 9-4.2 11.6 0c-2.600 4.200-9 4.200-11.600 0z" fill="#b9b9b9" stroke="#8f8f8f" stroke-width="1"/>
<circle cx="57.8" cy="229.75" r="2.1" fill="#8a8a8a"/>
<path d="M71.6 225.35h4.600l1 1.200h7.200v7.800h-12.800z" fill="#8c8c8c"/><path d="M77.8 227.35v6.800" stroke="#a9a9a9" stroke-width="0.600"/>
<text x="95.8" y="232.6" font-size="8.3" fill="#4c4c4c" font-weight="normal" textLength="21.7" lengthAdjust="spacingAndGlyphs" font-family="Liberation Sans, sans-serif" >Joints</text>
<rect x="48.800" y="241.6" width="148.2" height="14.600" fill="#f5f5f5"/>
<path d="M35 244.32000000000002v9.2l6.6-4.6z" fill="#fdfdfd" stroke="#6c6c6c" stroke-width="1.3" stroke-linejoin="round"/>
<path d="M52 248.92000000000002c2.6-4.2 9-4.2 11.6 0c-2.600 4.200-9 4.200-11.600 0z" fill="#b9b9b9" stroke="#8f8f8f" stroke-width="1"/>
<circle cx="57.8" cy="248.92000000000002" r="2.1" fill="#8a8a8a"/>
<rect x="71.6" y="242.92000000000002" width="7.4" height="12" rx="1.800" fill="#fbfbfb" stroke="#6c6c6c" stroke-width="1.200"/><rect x="76.6" y="247.72000000000003" width="7.200" height="7.200" rx="1.800" fill="#fbfbfb" stroke="#6c6c6c" stroke-width="1.200"/>
<text x="95.7" y="251.8" font-size="8.3" fill="#4c4c4c" font-weight="normal" textLength="92.3" lengthAdjust="spacingAndGlyphs" font-family="Liberation Sans, sans-serif" >Piston and Cylinder v1:1</text>
<rect x="48.800" y="260.8" width="97.0" height="14.600" fill="#f5f5f5"/>
<path d="M35 263.49v9.2l6.6-4.6z" fill="#fdfdfd" stroke="#6c6c6c" stroke-width="1.3" stroke-linejoin="round"/>
<path d="M52 268.09000000000003c2.6-4.2 9-4.2 11.6 0c-2.600 4.200-9 4.200-11.600 0z" fill="#b9b9b9" stroke="#8f8f8f" stroke-width="1"/>
<circle cx="57.8" cy="268.09000000000003" r="2.1" fill="#8a8a8a"/>
<rect x="71.6" y="262.09000000000003" width="7.4" height="12" rx="1.800" fill="#fbfbfb" stroke="#6c6c6c" stroke-width="1.200"/><rect x="76.6" y="266.89000000000004" width="7.200" height="7.200" rx="1.800" fill="#fbfbfb" stroke="#6c6c6c" stroke-width="1.200"/>
<text x="95.7" y="271.0" font-size="8.3" fill="#4c4c4c" font-weight="normal" textLength="41.1" lengthAdjust="spacingAndGlyphs" font-family="Liberation Sans, sans-serif" >Crank v1:1</text>
<rect x="48.800" y="280.0" width="112.0" height="14.600" fill="#f5f5f5"/>
<path d="M35 282.65999999999997v9.2l6.6-4.6z" fill="#fdfdfd" stroke="#6c6c6c" stroke-width="1.3" stroke-linejoin="round"/>
<path d="M52 287.26c2.6-4.2 9-4.2 11.6 0c-2.600 4.200-9 4.200-11.600 0z" fill="#f6f6f6" stroke="#c9c9c9" stroke-width="1"/>
<circle cx="57.8" cy="287.26" r="2.1" fill="#e4e4e4"/>
<rect x="72.1" y="281.46" width="12" height="11.6" rx="2.600" fill="#f8f8f8" stroke="#7a7a7a" stroke-width="1.200"/>
<path d="M77.5 285.26l4 0.5l0.5 4.500l-3.500 1z" fill="#e79a5c"/><path d="M75.0 286.26h3v3h-3z" fill="#d9d9d9"/>
<text x="95.7" y="290.1" font-size="8.3" fill="#4c4c4c" font-weight="normal" textLength="56.1" lengthAdjust="spacingAndGlyphs" font-family="Liberation Sans, sans-serif" >Crank Holder:1</text>
<rect x="48.800" y="299.1" width="111.4" height="14.600" fill="#f5f5f5"/>
<path d="M35 301.83000000000004v9.2l6.6-4.6z" fill="#fdfdfd" stroke="#6c6c6c" stroke-width="1.3" stroke-linejoin="round"/>
<path d="M52 306.43000000000006c2.6-4.2 9-4.2 11.6 0c-2.600 4.200-9 4.200-11.600 0z" fill="#b9b9b9" stroke="#8f8f8f" stroke-width="1"/>
<circle cx="57.8" cy="306.43000000000006" r="2.1" fill="#8a8a8a"/>
<rect x="72.1" y="300.63000000000005" width="12" height="11.6" rx="2.600" fill="#f8f8f8" stroke="#7a7a7a" stroke-width="1.200"/>
<rect x="75.5" y="304.43000000000006" width="5" height="4.500" fill="#e2e2e2"/>
<text x="95.7" y="309.3" font-size="8.3" fill="#4c4c4c" font-weight="normal" textLength="55.5" lengthAdjust="spacingAndGlyphs" font-family="Liberation Sans, sans-serif" >Piston Pin v1:1</text>
<path d="M247.8 285.8L247.8 298.6L251.4 295.9L254.4 302.3L257 301.2L254 295L257.4 294.4Z" fill="#fff" stroke="#8c8c8c" stroke-width="1.2" stroke-linejoin="round"/><path d="M252 296.500l2.600 5.400l1.800-0.800l-2.600-5.400z" fill="#a4a4a4"/>
<rect x="6" y="805.500" width="240" height="19" fill="#efefef" stroke="#e4e4e4" stroke-width="0.800"/>
<text x="26.0" y="818.4" font-size="8.3" fill="#8a8a8a" font-weight="normal" textLength="45.0" lengthAdjust="spacingAndGlyphs" font-family="Liberation Sans, sans-serif" >COMMENTS</text>
<circle cx="232.800" cy="815.300" r="3.300" fill="#2e2e2e"/><path d="M230.800 815.300h4M232.800 813.300v4" stroke="#ccc" stroke-width="0.900"/>
<g fill="#5c5c5c"><rect x="11.500" y="844.0" width="1.600" height="9"/><path d="M19.500 844.0v9l-6.200-4.500z"/>
<path d="M38 844.0v9l-6.500-4.500z"/><path d="M42 846.3v4.400l-3-2.200z"/>
<path d="M51.500 843.0v11l9.500-5.500z" fill="#4a4a4a"/>
<path d="M74.500 844.0v9l6.500-4.500z"/><path d="M70.500 846.3v4.400l3-2.200z"/>
<path d="M92 844.0v9l6.200-4.500z"/><rect x="98.400" y="844.0" width="1.600" height="9"/></g>
<g fill="none" stroke="#8a8a8a" stroke-width="0.800"><rect x="120.5" y="846.7" width="3" height="3.200"/><rect x="125.1" y="846.7" width="3" height="3.200"/><rect x="129.7" y="846.7" width="3" height="3.200"/></g>
<path d="M144.5 843.0l5 4.500l-2.500 0.500l-2 3l-1.500-1.500l-4 4l-0.800-0.800l4-4l-1.700-1.700l3-2z" fill="#ee9a4e"/>
<path d="M159.0 843.0h3.500v11.500h-3.500z" fill="#f8f8f8" stroke="#9a9a9a" stroke-width="0.800"/><rect x="162.5" y="843.0" width="8.500" height="6.500" fill="#4f96d6"/><rect x="162.5" y="843.0" width="8.500" height="2" fill="#8cc0ee"/>
<g fill="none" stroke="#8a8a8a" stroke-width="0.800"><rect x="177.5" y="846.7" width="3" height="3.200"/><rect x="182.1" y="846.7" width="3" height="3.200"/><rect x="186.7" y="846.7" width="3" height="3.200"/></g>
<path d="M196 845.0h4l1-1.500h5.500v10.500h-10.500z" fill="#f4d9a4" stroke="#e2a64a" stroke-width="1"/><path d="M203 842.5l3.500 2.500l-3.500 2.500z" fill="#ee9a4e"/>
<rect x="214" y="843.0" width="11" height="11" fill="#f6f6f6" stroke="#9ab4d0" stroke-width="0.900"/><path d="M216 845.5h7M216 848.0h7M216 850.5h4" stroke="#e0a060" stroke-width="0.900"/><path d="M221 849.5l4 4" stroke="#777" stroke-width="1.200"/>
<path d="M235.500 845.0l2.500-2.500h9v9.500l-2.500 2.500h-9z" fill="#5c9bd8"/><path d="M235.500 845.0l2.500-2.500h9l-2.500 2.500z" fill="#8fc0ee"/>
<path d="M260 843.0l5 4.500l-2.500 0.500l-2 3l-1.500-1.500l-4 4l-0.800-0.800l4-4l-1.700-1.700l3-2z" fill="#ee9a4e"/>
<g fill="#d9d9d9" stroke="#8f8f8f" stroke-width="0.800"><path d="M273.500 846.5l4-3v9l-4 2.500z"/><path d="M279.500 844.5l3-1.500l2.500 2v7.500l-5.500 2z"/></g>
<g fill="none" stroke="#8a8a8a" stroke-width="0.800"><rect x="292.5" y="846.7" width="3" height="3.200"/><rect x="297.1" y="846.7" width="3" height="3.200"/><rect x="301.7" y="846.7" width="3" height="3.200"/></g>
<path d="M312.5 843.0h3.500v11.500h-3.500z" fill="#f8f8f8" stroke="#9a9a9a" stroke-width="0.800"/><rect x="316" y="843.0" width="8.500" height="6.500" fill="#4f96d6"/><rect x="316" y="843.0" width="8.500" height="2" fill="#8cc0ee"/>
<path d="M332.0 843.0h3.500v11.500h-3.500z" fill="#f8f8f8" stroke="#9a9a9a" stroke-width="0.800"/><rect x="335.5" y="843.0" width="8.500" height="6.500" fill="#4f96d6"/><rect x="335.5" y="843.0" width="8.500" height="2" fill="#8cc0ee"/>
<path d="M351.5 843.0h3.500v11.500h-3.500z" fill="#f8f8f8" stroke="#9a9a9a" stroke-width="0.800"/><rect x="355" y="843.0" width="8.500" height="6.500" fill="#4f96d6"/><rect x="355" y="843.0" width="8.500" height="2" fill="#8cc0ee"/>
<path d="M370.5 843.0h3.500v11.500h-3.500z" fill="#f8f8f8" stroke="#9a9a9a" stroke-width="0.800"/><rect x="374" y="843.0" width="8.500" height="6.500" fill="#4f96d6"/><rect x="374" y="843.0" width="8.500" height="2" fill="#8cc0ee"/>
<path d="M381 837h9.500l-4 5.500v14.500h-1.500v-14.500z" fill="#333"/>
<rect x="676.5" y="804" width="192" height="21" fill="#f6f6f6"/>
<g stroke="#4a4a4a" fill="none" stroke-width="1"><ellipse cx="685.300" cy="814.8" rx="4.800" ry="1.800"/><path d="M685.300 809.8v10"/><path d="M683.600 811.4l1.700-2.200l1.700 2.200" fill="#4a4a4a"/></g>
<path d="M697.2 814.0h3.4l-1.7 2.2z" fill="#444"/>
<rect x="706.500" y="811.0" width="10.500" height="8.300" fill="#f4f4f4" stroke="#555" stroke-width="1"/><path d="M706.500 813.4h10.500M709 809.4v2.400M714.500 809.4v2.400" stroke="#555" stroke-width="1"/><rect x="709" y="815.1999999999999" width="5.500" height="2.600" fill="#8a8a8a"/>
<path d="M728.500 813.3c0-1.200 1.600-1.200 1.600 0v-2.500c0-1.200 1.600-1.200 1.600 0v-1c0-1.200 1.600-1.200 1.600 0v1c0-1.200 1.600-1.200 1.600 0v2c1-1.500 2.400-0.800 1.800 0.400l-2 4.100c-0.500 1-1.200 1.500-2.200 1.500h-1.800c-1.200 0-2.200-1-2.200-2.200z" fill="#f8f8f8" stroke="#444" stroke-width="0.900"/>
<circle cx="750.800" cy="814.0" r="3.300" fill="#f6f6f6" stroke="#444" stroke-width="1"/><path d="M753.200 816.5l3 3" stroke="#444" stroke-width="1.400"/><path d="M755.600 809.3v3.400M753.900 811.0h3.400" stroke="#444" stroke-width="0.800"/>
<circle cx="773.600" cy="814.0" r="4" fill="#f6f6f6" stroke="#444" stroke-width="1"/><path d="M776.500 817.0l3.400 3.400" stroke="#444" stroke-width="1.500"/>
<path d="M785.3 814.0h3.4l-1.7 2.2z" fill="#444"/>
<rect x="794.800" y="810.1999999999999" width="10.400" height="7.400" rx="0.800" fill="#8fa8cc" stroke="#6a7a90" stroke-width="0.900"/><rect x="797" y="812.0" width="6" height="3.800" fill="#b4c8e4"/><path d="M797.500 819.8h5M800 817.5999999999999v2.200" stroke="#555" stroke-width="1.100"/>
<path d="M809.8 814.0h3.4l-1.7 2.2z" fill="#444"/>
<rect x="820.500" y="810.0" width="10.400" height="9.600" fill="#a9a9a9" stroke="#8a8a8a" stroke-width="0.800"/><path d="M820.500 813.1999999999999h10.400M820.500 816.4h10.400M824 810.0v9.600M827.400 810.0v9.600" stroke="#c9c9c9" stroke-width="0.600"/>
<path d="M834.7 814.0h3.4l-1.7 2.2z" fill="#444"/>
<rect x="845.500" y="810.1999999999999" width="10.400" height="9.200" fill="#86a4d2" stroke="#6f8fc4" stroke-width="1.100"/><path d="M850.700 810.1999999999999v9.200M845.500 814.8h10.400" stroke="#c4d4ec" stroke-width="1"/>
<path d="M859.7 814.0h3.4l-1.7 2.2z" fill="#444"/>
<circle cx="1525" cy="815.300" r="5" fill="#1e1e1e"/><path d="M1522.500 816.500c1-3 4-3.500 5.500-1.500c-1.500-0.500-3 0-3.500 1.500c1 1 2.500 0.500 3-0.500c0 2-3 3-5 0.500z" fill="#f2f2f2"/>
<g transform="translate(1526,846.500)"><circle r="3" fill="none" stroke="#9a9a9a" stroke-width="1.600"/><circle r="4.600" fill="none" stroke="#9a9a9a" stroke-width="1.500" stroke-dasharray="1.800 1.810"/></g>
<g id="viewcube" font-family="Liberation Sans, sans-serif">
<path d="M1491 178.300l-27-12.300v-35.500l27 7.400z" fill="#efefef"/>
<path d="M1491 178.300l24.500-13.500l2.500-34.300l-27 7.400z" fill="#e9e9e9"/>
<path d="M1462.900 130.500l26.900-6.100l28.200 6.100l-27 7.400z" fill="#f3f3f3"/>
<path d="M1462.900 130.500l26.900-6.100l28.200 6.100M1462.900 130.500l28.100 7.400l27-7.400M1491 137.900v40.400" fill="none" stroke="#b4b4b4" stroke-width="0.900" stroke-dasharray="3 2"/>
<path d="M1462.900 130.500l1.100 35.500l27 12.300l24.500-13.500l2.500-34.300" fill="none" stroke="#e2e2e2" stroke-width="0.800"/>
<text transform="translate(1467.300,152) rotate(15)" font-size="7.400" fill="#a4a4a4" font-weight="bold" textLength="19" lengthAdjust="spacingAndGlyphs">FRONT</text>
<text transform="translate(1496.500,161.500) rotate(-27)" font-size="7.400" fill="#a8a8a8" font-weight="bold" textLength="18" lengthAdjust="spacingAndGlyphs">RIGHT</text>
<text transform="translate(1484.500,133.200) rotate(10)" font-size="5" fill="#c4c4c4">TOP</text>
<path d="M1489.800 113v12.500" stroke="#a9dba4" stroke-width="1.300"/>
<text x="1487.300" y="114" font-size="7.500" fill="#a4d99e">Y</text>
<path d="M1459.500 168l5.500-2.600" stroke="#8e8ccc" stroke-width="1.200"/>
<text x="1451.800" y="172.500" font-size="8" fill="#8684c8">Z</text>
<path d="M1515.500 165l5.500 2.500" stroke="#f0c4c4" stroke-width="1.200"/>
<text x="1522.500" y="172" font-size="8" fill="#ecb0b0">X</text>
</g>
</svg>
  <div class="abs" id="blacktop"></div>
  <div class="abs" id="blackleft"></div>
</div>
</body>
</html>
